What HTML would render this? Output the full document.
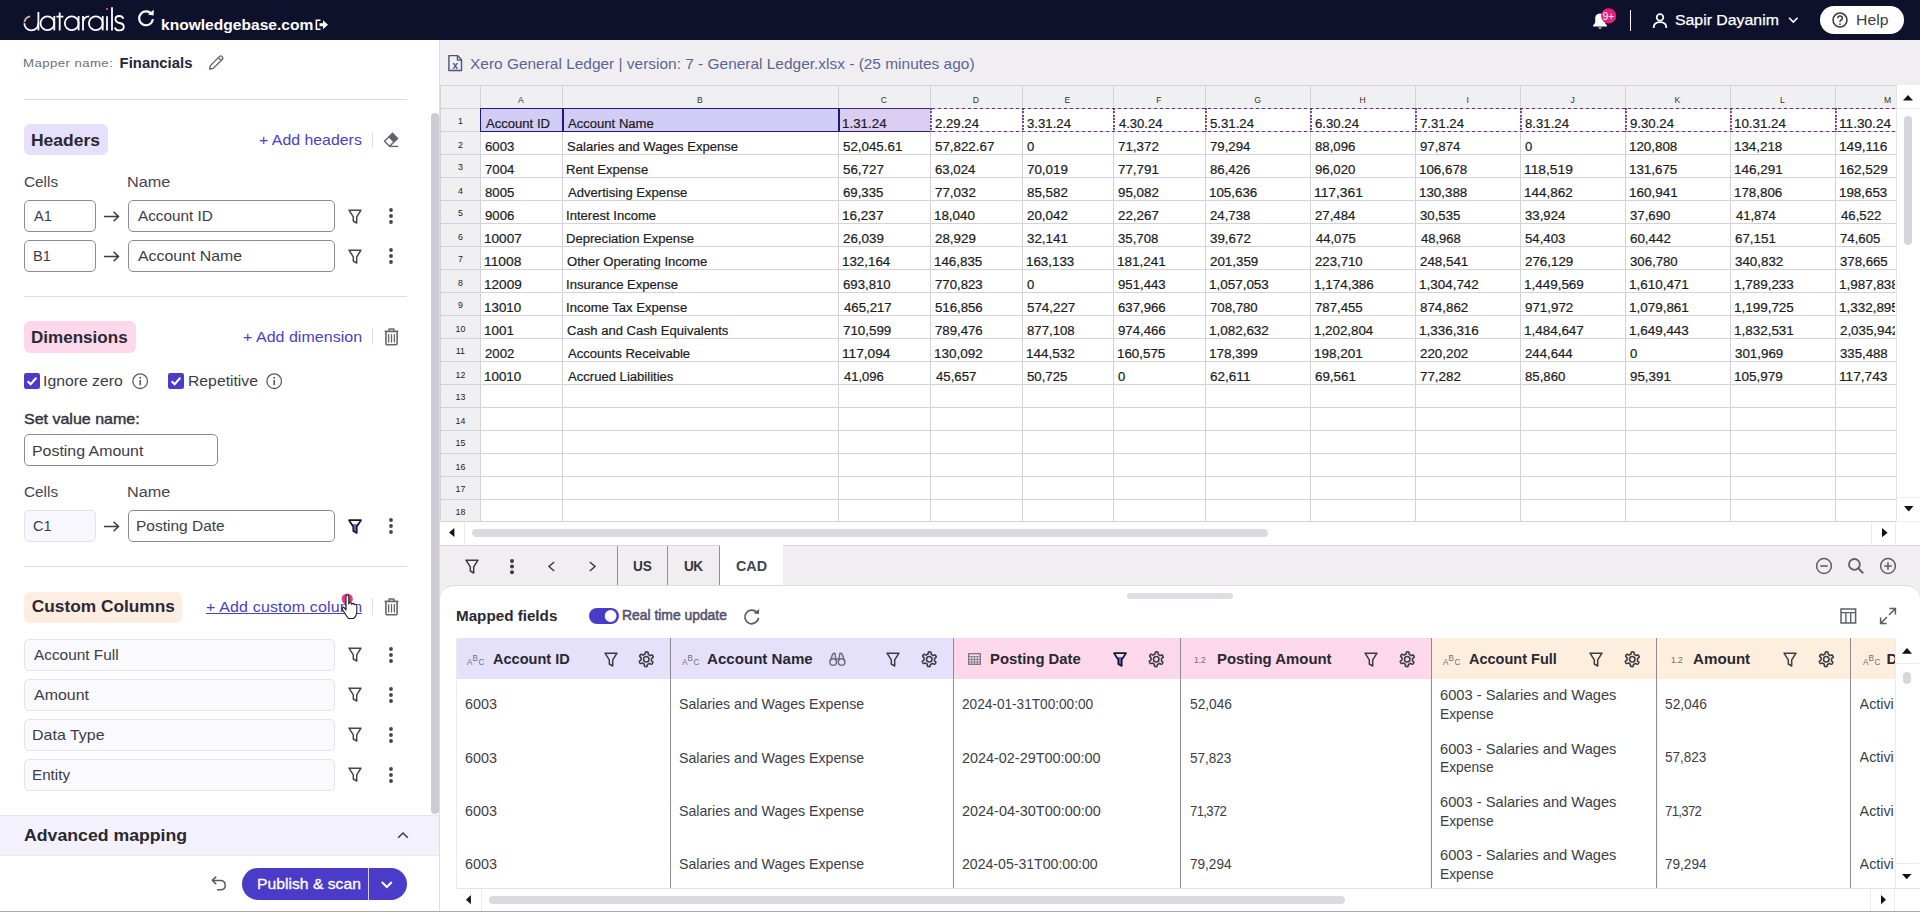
<!DOCTYPE html>
<html><head><meta charset="utf-8"><title>Datarails Mapper</title>
<style>
html,body{margin:0;padding:0;width:1920px;height:912px;overflow:hidden;background:#fff}
body{position:relative;font-family:"Liberation Sans",sans-serif}
svg text{font-family:"Liberation Sans",sans-serif}
</style></head><body>
<div style="position:absolute;left:0px;top:0px;width:1920px;height:912px;background:#ffffff"></div>
<div style="position:absolute;left:440px;top:40px;width:1480px;height:872px;background:#f0eef1"></div>
<div style="position:absolute;left:439px;top:40px;width:1px;height:872px;background:#dddbe3"></div>
<div style="position:absolute;left:0px;top:0px;width:1920px;height:40px;background:#0e112c"></div>
<svg style="position:absolute;left:0px;top:0px;overflow:visible;" width="130" height="39" viewBox="0 0 130 39"><path d="M24.3 23.3 A7.05 7.05 0 0 0 38.4 23.3" fill="none" stroke="#ffffff" stroke-width="1.8"/><path d="M24.4 22.0 A7.05 7.05 0 0 1 30.2 16.3" fill="none" stroke="#e2b49e" stroke-width="1.8"/><path d="M38.4 12 V30.4" stroke="#ffffff" stroke-width="1.8"/><circle cx="47.4" cy="23.3" r="6.9" fill="none" stroke="#ffffff" stroke-width="1.8"/><path d="M54.3 16 V30.4" stroke="#ffffff" stroke-width="1.8"/><path d="M59.7 12.4 V30.4 M56.4 16.6 H63.4" fill="none" stroke="#ffffff" stroke-width="1.8"/><circle cx="71.7" cy="23.3" r="6.9" fill="none" stroke="#ffffff" stroke-width="1.8"/><path d="M78.6 16 V30.4" stroke="#ffffff" stroke-width="1.8"/><path d="M83 30.4 V16 M83 22.5 Q83.4 16.3 89.2 16.3" fill="none" stroke="#ffffff" stroke-width="1.8"/><circle cx="95.8" cy="23.3" r="6.9" fill="none" stroke="#ffffff" stroke-width="1.8"/><path d="M102.7 16 V30.4" stroke="#ffffff" stroke-width="1.8"/><path d="M107 16.2 V30.4" stroke="#ffffff" stroke-width="1.8"/><rect x="106" y="8" width="2" height="2" fill="#ff2d8a"/><path d="M112 7.2 V30.4" stroke="#ffffff" stroke-width="1.8"/><path d="M123.4 18.8 Q122.4 16 119.2 16 Q115.5 16 115.5 19.3 Q115.5 22.3 119.5 23 Q123.8 23.7 123.8 26.8 Q123.8 30.4 119.3 30.4 Q115.6 30.4 114.8 27.4" fill="none" stroke="#ffffff" stroke-width="1.8"/></svg>
<svg style="position:absolute;left:137px;top:9px;overflow:visible;" width="18" height="18" viewBox="0 0 18 18"><path d="M14.6 5.2 A6.9 6.9 0 1 0 15.9 10.2" fill="none" stroke="#fff" stroke-width="2.1"/><path d="M10.8 5.6 L16.6 6.4 L16.8 0.8 Z" fill="#fff"/></svg>
<div style="position:absolute;left:160.61px;top:18px;font-size:14.3px;line-height:1;font-weight:bold;color:#ffffff;white-space:nowrap;letter-spacing:0.000px;transform:scaleX(1.0891);transform-origin:0 0;">knowledgebase.com</div>
<svg style="position:absolute;left:315px;top:19px;overflow:visible;" width="14" height="12" viewBox="0 0 14 12"><path d="M5.5 1.2 H1.4 V10.2 H5.5" fill="none" stroke="#fff" stroke-width="1.6"/><path d="M4.5 4.2 H8 V1.2 L13 5.7 L8 10.2 V7.2 H4.5 Z" fill="#fff"/></svg>
<svg style="position:absolute;left:1592px;top:12px;overflow:visible;" width="17" height="18" viewBox="0 0 17 18"><path d="M8 1.5 C4.3 1.5 3.2 4.3 3.2 7.2 V10.8 L1 13.6 V14.6 H15 V13.6 L12.8 10.8 V7.2 C12.8 4.3 11.7 1.5 8 1.5 Z" fill="#fff"/><path d="M6 15.6 Q8 18 10 15.6 Z" fill="#fff"/></svg>
<svg style="position:absolute;left:1600px;top:8px;overflow:visible;" width="17" height="17" viewBox="0 0 17 17"><circle cx="8.7" cy="7.8" r="7.6" fill="#e5207a"/><text x="8.4" y="11.6" text-anchor="middle" font-family="Liberation Sans" font-size="10" fill="#fff">9+</text></svg>
<div style="position:absolute;left:1630px;top:10px;width:1px;height:21px;background:#ffffff"></div>
<svg style="position:absolute;left:1652px;top:12px;overflow:visible;" width="17" height="17" viewBox="0 0 17 17"><circle cx="8" cy="5.4" r="3.3" fill="none" stroke="#fff" stroke-width="1.7"/><path d="M1.6 16 Q1.6 10.2 8 10.2 Q14.4 10.2 14.4 16" fill="none" stroke="#fff" stroke-width="1.8"/></svg>
<div style="position:absolute;left:1675.48px;top:12px;font-size:15.2px;line-height:1;font-weight:normal;color:#ffffff;white-space:nowrap;letter-spacing:0.000px;transform:scaleX(1.0426);transform-origin:0 0;-webkit-text-stroke:0.25px #ffffff;">Sapir Dayanim</div>
<svg style="position:absolute;left:1788px;top:16px;overflow:visible;" width="11" height="8" viewBox="0 0 11 8"><path d="M1 1.7 L5.3 6 L9.6 1.7" fill="none" stroke="#fff" stroke-width="1.6"/></svg>
<div style="position:absolute;left:1820px;top:6px;width:84px;height:28px;background:#ffffff;border-radius:14px"></div>
<svg style="position:absolute;left:1831px;top:12px;overflow:visible;" width="18" height="17" viewBox="0 0 18 17"><circle cx="9" cy="8.1" r="7" fill="none" stroke="#3a3a3a" stroke-width="1.5"/><path d="M6.8 6.3 Q6.8 4.1 9 4.1 Q11.3 4.1 11.3 6.2 Q11.3 7.6 9.6 8.4 Q9 8.8 9 10" fill="none" stroke="#3a3a3a" stroke-width="1.5"/><circle cx="9" cy="12.2" r="0.9" fill="#3a3a3a"/></svg>
<div style="position:absolute;left:1855.56px;top:12px;font-size:15.2px;line-height:1;font-weight:normal;color:#3d3d3d;white-space:nowrap;letter-spacing:0.000px;transform:scaleX(1.0373);transform-origin:0 0;">Help</div>
<div style="position:absolute;left:23.28px;top:58px;font-size:11.8px;line-height:1;font-weight:normal;color:#6e6e78;white-space:nowrap;letter-spacing:0.375px;transform:scaleX(1.1200);transform-origin:0 0;">Mapper name:</div>
<div style="position:absolute;left:119.60px;top:56px;font-size:14.9px;line-height:1;font-weight:bold;color:#25243a;white-space:nowrap;letter-spacing:0.000px;">Financials</div>
<svg style="position:absolute;left:207px;top:54px;overflow:visible;" width="18" height="18" viewBox="0 0 18 18"><path d="M2.6 15.2 L3.4 11.6 L12.6 2.4 Q13.6 1.4 14.6 2.4 L15.4 3.2 Q16.4 4.2 15.4 5.2 L6.2 14.4 Z M11.4 3.6 L14.2 6.4" fill="none" stroke="#5a5a66" stroke-width="1.3" stroke-linejoin="round"/></svg>
<div style="position:absolute;left:24px;top:99px;width:383px;height:1px;background:#dcdbe2"></div>
<div style="position:absolute;left:24px;top:124px;width:84px;height:31px;background:#e5e0fb;border-radius:6px"></div>
<div style="position:absolute;left:31.49px;top:132px;font-size:17.3px;line-height:1;font-weight:bold;color:#2a2832;white-space:nowrap;letter-spacing:0.000px;transform:scaleX(1.0105);transform-origin:0 0;">Headers</div>
<div style="position:absolute;left:259.44px;top:133px;font-size:14.3px;line-height:1;font-weight:normal;color:#4b40c4;white-space:nowrap;letter-spacing:-0.000px;transform:scaleX(1.1104);transform-origin:0 0;">+ Add headers</div>
<div style="position:absolute;left:372px;top:132px;width:1px;height:16px;background:#dedde4"></div>
<svg style="position:absolute;left:0px;top:0px;overflow:visible;" width="1" height="1" viewBox="0 0 1 1"><path d="M392.50 133.30 L397.60 138.40 L389.50 146.30 L384.50 141.30 Z" fill="none" stroke="#62626c" stroke-width="1.4" stroke-linejoin="miter"/><path d="M392.50 133.30 L397.60 138.40 L393.60 142.40 L388.50 137.30 Z" fill="#62626c"/><path d="M389.50 146.40 H398.20" stroke="#62626c" stroke-width="1.4"/></svg>
<div style="position:absolute;left:23.50px;top:174px;font-size:15.2px;line-height:1;font-weight:normal;color:#46464f;white-space:nowrap;letter-spacing:0.000px;transform:scaleX(1.0091);transform-origin:0 0;">Cells</div>
<div style="position:absolute;left:127.23px;top:174px;font-size:15.2px;line-height:1;font-weight:normal;color:#46464f;white-space:nowrap;letter-spacing:0.000px;transform:scaleX(1.0692);transform-origin:0 0;">Name</div>
<div style="position:absolute;left:24px;top:200px;width:70px;height:30px;background:#fff;border:1px solid #8a8a93;border-radius:5px"></div>
<div style="position:absolute;left:34.00px;top:209px;font-size:14.6px;line-height:1;font-weight:normal;color:#3c3c46;white-space:nowrap;letter-spacing:0.000px;">A1</div>
<svg style="position:absolute;left:103px;top:211px;overflow:visible;" width="17" height="11" viewBox="0 0 17 11"><path d="M1 5.5 H15.5 M10.6 0.8 L15.5 5.5 L10.6 10.2" fill="none" stroke="#3a3a44" stroke-width="1.5"/></svg>
<div style="position:absolute;left:128px;top:200px;width:205px;height:30px;background:#fff;border:1px solid #8a8a93;border-radius:5px"></div>
<div style="position:absolute;left:137.60px;top:209px;font-size:14.6px;line-height:1;font-weight:normal;color:#3c3c46;white-space:nowrap;letter-spacing:0.000px;transform:scaleX(1.0493);transform-origin:0 0;">Account ID</div>
<svg style="position:absolute;left:348px;top:208.5px;overflow:visible;" width="14" height="15" viewBox="0 0 14 15"><path d="M1 1.2 H13 L8.7 7.8 V14 L5.3 12.0 V7.8 Z" fill="none" stroke="#44444e" stroke-width="1.5" stroke-linejoin="round"/></svg>
<svg style="position:absolute;left:387.8px;top:207px;overflow:visible;" width="6" height="18" viewBox="0 0 6 18"><circle cx="3" cy="3" r="1.9" fill="#444"/><circle cx="3" cy="9" r="1.9" fill="#444"/><circle cx="3" cy="15" r="1.9" fill="#444"/></svg>
<div style="position:absolute;left:24px;top:240px;width:70px;height:30px;background:#fff;border:1px solid #8a8a93;border-radius:5px"></div>
<div style="position:absolute;left:33.00px;top:249px;font-size:14.6px;line-height:1;font-weight:normal;color:#3c3c46;white-space:nowrap;letter-spacing:0.000px;">B1</div>
<svg style="position:absolute;left:103px;top:251px;overflow:visible;" width="17" height="11" viewBox="0 0 17 11"><path d="M1 5.5 H15.5 M10.6 0.8 L15.5 5.5 L10.6 10.2" fill="none" stroke="#3a3a44" stroke-width="1.5"/></svg>
<div style="position:absolute;left:128px;top:240px;width:205px;height:30px;background:#fff;border:1px solid #8a8a93;border-radius:5px"></div>
<div style="position:absolute;left:137.60px;top:249px;font-size:14.6px;line-height:1;font-weight:normal;color:#3c3c46;white-space:nowrap;letter-spacing:0.000px;transform:scaleX(1.0874);transform-origin:0 0;">Account Name</div>
<svg style="position:absolute;left:348px;top:248.5px;overflow:visible;" width="14" height="15" viewBox="0 0 14 15"><path d="M1 1.2 H13 L8.7 7.8 V14 L5.3 12.0 V7.8 Z" fill="none" stroke="#44444e" stroke-width="1.5" stroke-linejoin="round"/></svg>
<svg style="position:absolute;left:387.8px;top:247px;overflow:visible;" width="6" height="18" viewBox="0 0 6 18"><circle cx="3" cy="3" r="1.9" fill="#444"/><circle cx="3" cy="9" r="1.9" fill="#444"/><circle cx="3" cy="15" r="1.9" fill="#444"/></svg>
<div style="position:absolute;left:24px;top:296px;width:383px;height:1px;background:#dcdbe2"></div>
<div style="position:absolute;left:24px;top:321px;width:112px;height:32px;background:#fcd8ea;border-radius:6px"></div>
<div style="position:absolute;left:31.31px;top:329px;font-size:17.3px;line-height:1;font-weight:bold;color:#2a2832;white-space:nowrap;letter-spacing:0.000px;transform:scaleX(0.9865);transform-origin:0 0;">Dimensions</div>
<div style="position:absolute;left:243.24px;top:330px;font-size:14.3px;line-height:1;font-weight:normal;color:#4b40c4;white-space:nowrap;letter-spacing:0.013px;transform:scaleX(1.1200);transform-origin:0 0;">+ Add dimension</div>
<div style="position:absolute;left:372px;top:328px;width:1px;height:17px;background:#dedde4"></div>
<svg style="position:absolute;left:384px;top:327.5px;overflow:visible;" width="15" height="18" viewBox="0 0 15 18"><path d="M0.6 3.4 H14.4" stroke="#66666e" stroke-width="1.7"/><path d="M5 3.2 V1.5 Q5 1 5.5 1 H9.5 Q10 1 10 1.5 V3.2" fill="none" stroke="#66666e" stroke-width="1.5"/><path d="M1.9 3.6 V15.4 Q1.9 16.8 3.3 16.8 H11.7 Q13.1 16.8 13.1 15.4 V3.6" fill="none" stroke="#66666e" stroke-width="1.6"/><path d="M4.6 6.6 V14 M7.5 6.6 V14 M10.4 6.6 V14" stroke="#66666e" stroke-width="1.3" stroke-linecap="round"/></svg>
<svg style="position:absolute;left:24px;top:373px;overflow:visible;" width="16" height="16" viewBox="0 0 16 16"><rect x="0" y="0" width="16" height="16" rx="2.2" fill="#4b3bcb"/><path d="M3.6 8.2 L6.6 11.2 L12.4 4.8" fill="none" stroke="#fff" stroke-width="2.1"/></svg>
<div style="position:absolute;left:43.24px;top:373px;font-size:15.2px;line-height:1;font-weight:normal;color:#3c3c46;white-space:nowrap;letter-spacing:0.000px;transform:scaleX(1.0373);transform-origin:0 0;">Ignore zero</div>
<svg style="position:absolute;left:131.5px;top:372.8px;overflow:visible;" width="17" height="17" viewBox="0 0 17 17"><circle cx="8.2" cy="8.2" r="7.3" fill="none" stroke="#5a5a64" stroke-width="1.3"/><path d="M8.2 7 V12.3" stroke="#5a5a64" stroke-width="1.6"/><circle cx="8.2" cy="4.8" r="1" fill="#5a5a64"/></svg>
<svg style="position:absolute;left:168px;top:373px;overflow:visible;" width="16" height="16" viewBox="0 0 16 16"><rect x="0" y="0" width="16" height="16" rx="2.2" fill="#4b3bcb"/><path d="M3.6 8.2 L6.6 11.2 L12.4 4.8" fill="none" stroke="#fff" stroke-width="2.1"/></svg>
<div style="position:absolute;left:187.76px;top:373px;font-size:15.2px;line-height:1;font-weight:normal;color:#3c3c46;white-space:nowrap;letter-spacing:0.000px;transform:scaleX(1.0364);transform-origin:0 0;">Repetitive</div>
<svg style="position:absolute;left:266.3px;top:372.8px;overflow:visible;" width="17" height="17" viewBox="0 0 17 17"><circle cx="8.2" cy="8.2" r="7.3" fill="none" stroke="#5a5a64" stroke-width="1.3"/><path d="M8.2 7 V12.3" stroke="#5a5a64" stroke-width="1.6"/><circle cx="8.2" cy="4.8" r="1" fill="#5a5a64"/></svg>
<div style="position:absolute;left:23.65px;top:412px;font-size:14.6px;line-height:1;font-weight:normal;color:#33333c;white-space:nowrap;letter-spacing:0.000px;transform:scaleX(1.0966);transform-origin:0 0;-webkit-text-stroke:0.4px #33333c;">Set value name:</div>
<div style="position:absolute;left:24px;top:434px;width:192px;height:30px;background:#fff;border:1px solid #8a8a93;border-radius:5px"></div>
<div style="position:absolute;left:32.31px;top:444px;font-size:14.6px;line-height:1;font-weight:normal;color:#3c3c46;white-space:nowrap;letter-spacing:-0.000px;transform:scaleX(1.0891);transform-origin:0 0;">Posting Amount</div>
<div style="position:absolute;left:23.50px;top:484px;font-size:15.2px;line-height:1;font-weight:normal;color:#46464f;white-space:nowrap;letter-spacing:0.000px;transform:scaleX(1.0091);transform-origin:0 0;">Cells</div>
<div style="position:absolute;left:127.23px;top:484px;font-size:15.2px;line-height:1;font-weight:normal;color:#46464f;white-space:nowrap;letter-spacing:0.000px;transform:scaleX(1.0692);transform-origin:0 0;">Name</div>
<div style="position:absolute;left:24px;top:510px;width:70px;height:30px;background:#f8f7fd;border:1px solid #e3e1ec;border-radius:5px"></div>
<div style="position:absolute;left:33.00px;top:519px;font-size:14.6px;line-height:1;font-weight:normal;color:#3c3c46;white-space:nowrap;letter-spacing:0.000px;">C1</div>
<svg style="position:absolute;left:103px;top:521px;overflow:visible;" width="17" height="11" viewBox="0 0 17 11"><path d="M1 5.5 H15.5 M10.6 0.8 L15.5 5.5 L10.6 10.2" fill="none" stroke="#3a3a44" stroke-width="1.5"/></svg>
<div style="position:absolute;left:128px;top:510px;width:205px;height:30px;background:#fff;border:1px solid #8a8a93;border-radius:5px"></div>
<div style="position:absolute;left:136.34px;top:519px;font-size:14.6px;line-height:1;font-weight:normal;color:#3c3c46;white-space:nowrap;letter-spacing:0.000px;transform:scaleX(1.0610);transform-origin:0 0;">Posting Date</div>
<svg style="position:absolute;left:348px;top:518.5px;overflow:visible;" width="14" height="15" viewBox="0 0 14 15"><defs><linearGradient id="fg1" x1="0" y1="0" x2="0" y2="1"><stop offset="0.27" stop-color="#ffffff" stop-opacity="0"/><stop offset="0.27" stop-color="#7a70d8"/><stop offset="1" stop-color="#7a70d8"/></linearGradient></defs><path d="M1 1.2 H13 L8.7 7.8 V14 L5.3 12.0 V7.8 Z" fill="url(#fg1)" stroke="#15152a" stroke-width="1.7" stroke-linejoin="round"/></svg>
<svg style="position:absolute;left:387.8px;top:517px;overflow:visible;" width="6" height="18" viewBox="0 0 6 18"><circle cx="3" cy="3" r="1.9" fill="#444"/><circle cx="3" cy="9" r="1.9" fill="#444"/><circle cx="3" cy="15" r="1.9" fill="#444"/></svg>
<div style="position:absolute;left:24px;top:566px;width:383px;height:1px;background:#dcdbe2"></div>
<div style="position:absolute;left:24px;top:592px;width:158px;height:31px;background:#fdeee1;border-radius:6px"></div>
<div style="position:absolute;left:31.80px;top:598px;font-size:17.3px;line-height:1;font-weight:bold;color:#2a2832;white-space:nowrap;letter-spacing:0.000px;">Custom Columns</div>
<div style="position:absolute;left:206.24px;top:600px;font-size:14.3px;line-height:1;font-weight:normal;color:#4b40c4;white-space:nowrap;letter-spacing:0.133px;transform:scaleX(1.1200);transform-origin:0 0;">+ Add custom column</div>
<div style="position:absolute;left:206px;top:613px;width:156px;height:1.2px;background:#4b40c4"></div>
<div style="position:absolute;left:372px;top:598px;width:1px;height:17px;background:#dedde4"></div>
<svg style="position:absolute;left:384px;top:597.5px;overflow:visible;" width="15" height="18" viewBox="0 0 15 18"><path d="M0.6 3.4 H14.4" stroke="#66666e" stroke-width="1.7"/><path d="M5 3.2 V1.5 Q5 1 5.5 1 H9.5 Q10 1 10 1.5 V3.2" fill="none" stroke="#66666e" stroke-width="1.5"/><path d="M1.9 3.6 V15.4 Q1.9 16.8 3.3 16.8 H11.7 Q13.1 16.8 13.1 15.4 V3.6" fill="none" stroke="#66666e" stroke-width="1.6"/><path d="M4.6 6.6 V14 M7.5 6.6 V14 M10.4 6.6 V14" stroke="#66666e" stroke-width="1.3" stroke-linecap="round"/></svg>
<div style="position:absolute;left:24px;top:639px;width:309px;height:30px;background:#faf9fe;border:1px solid #e4e2ee;border-radius:5px"></div>
<div style="position:absolute;left:33.50px;top:648px;font-size:14.6px;line-height:1;font-weight:normal;color:#3c3c46;white-space:nowrap;letter-spacing:0.000px;transform:scaleX(1.0528);transform-origin:0 0;">Account Full</div>
<svg style="position:absolute;left:347.5px;top:647px;overflow:visible;" width="14" height="15" viewBox="0 0 14 15"><path d="M1 1.2 H13 L8.7 7.8 V14 L5.3 12.0 V7.8 Z" fill="none" stroke="#44444e" stroke-width="1.5" stroke-linejoin="round"/></svg>
<svg style="position:absolute;left:387.8px;top:645.5px;overflow:visible;" width="6" height="18" viewBox="0 0 6 18"><circle cx="3" cy="3" r="1.9" fill="#444"/><circle cx="3" cy="9" r="1.9" fill="#444"/><circle cx="3" cy="15" r="1.9" fill="#444"/></svg>
<div style="position:absolute;left:24px;top:679px;width:309px;height:30px;background:#faf9fe;border:1px solid #e4e2ee;border-radius:5px"></div>
<div style="position:absolute;left:33.50px;top:688px;font-size:14.6px;line-height:1;font-weight:normal;color:#3c3c46;white-space:nowrap;letter-spacing:0.000px;transform:scaleX(1.0931);transform-origin:0 0;">Amount</div>
<svg style="position:absolute;left:347.5px;top:687px;overflow:visible;" width="14" height="15" viewBox="0 0 14 15"><path d="M1 1.2 H13 L8.7 7.8 V14 L5.3 12.0 V7.8 Z" fill="none" stroke="#44444e" stroke-width="1.5" stroke-linejoin="round"/></svg>
<svg style="position:absolute;left:387.8px;top:685.5px;overflow:visible;" width="6" height="18" viewBox="0 0 6 18"><circle cx="3" cy="3" r="1.9" fill="#444"/><circle cx="3" cy="9" r="1.9" fill="#444"/><circle cx="3" cy="15" r="1.9" fill="#444"/></svg>
<div style="position:absolute;left:24px;top:719px;width:309px;height:30px;background:#faf9fe;border:1px solid #e4e2ee;border-radius:5px"></div>
<div style="position:absolute;left:32.40px;top:728px;font-size:14.6px;line-height:1;font-weight:normal;color:#3c3c46;white-space:nowrap;letter-spacing:0.000px;transform:scaleX(1.0961);transform-origin:0 0;">Data Type</div>
<svg style="position:absolute;left:347.5px;top:727px;overflow:visible;" width="14" height="15" viewBox="0 0 14 15"><path d="M1 1.2 H13 L8.7 7.8 V14 L5.3 12.0 V7.8 Z" fill="none" stroke="#44444e" stroke-width="1.5" stroke-linejoin="round"/></svg>
<svg style="position:absolute;left:387.8px;top:725.5px;overflow:visible;" width="6" height="18" viewBox="0 0 6 18"><circle cx="3" cy="3" r="1.9" fill="#444"/><circle cx="3" cy="9" r="1.9" fill="#444"/><circle cx="3" cy="15" r="1.9" fill="#444"/></svg>
<div style="position:absolute;left:24px;top:759px;width:309px;height:30px;background:#faf9fe;border:1px solid #e4e2ee;border-radius:5px"></div>
<div style="position:absolute;left:32.46px;top:768px;font-size:14.6px;line-height:1;font-weight:normal;color:#3c3c46;white-space:nowrap;letter-spacing:0.000px;transform:scaleX(1.0423);transform-origin:0 0;">Entity</div>
<svg style="position:absolute;left:347.5px;top:767px;overflow:visible;" width="14" height="15" viewBox="0 0 14 15"><path d="M1 1.2 H13 L8.7 7.8 V14 L5.3 12.0 V7.8 Z" fill="none" stroke="#44444e" stroke-width="1.5" stroke-linejoin="round"/></svg>
<svg style="position:absolute;left:387.8px;top:765.5px;overflow:visible;" width="6" height="18" viewBox="0 0 6 18"><circle cx="3" cy="3" r="1.9" fill="#444"/><circle cx="3" cy="9" r="1.9" fill="#444"/><circle cx="3" cy="15" r="1.9" fill="#444"/></svg>
<svg style="position:absolute;left:338px;top:591px;overflow:visible;" width="24" height="32" viewBox="0 0 24 32"><circle cx="9.2" cy="8" r="5.6" fill="#e0287d" opacity="0.9"/><path d="M8 5.5 Q8 4 9.4 4 Q10.8 4 10.8 5.5 V13 Q11 11.8 12.3 11.8 Q13.6 11.8 13.6 13.2 Q13.9 12.4 15 12.4 Q16.3 12.4 16.3 13.8 Q16.7 13.2 17.6 13.3 Q18.8 13.5 18.8 15 V20 Q18.8 25 15.5 27.5 H10.5 Q9.2 26 7 22.5 L4.4 18.6 Q3.6 17.4 4.6 16.7 Q5.6 16 6.6 17.2 L8 19 Z" fill="#fff" stroke="#1a1a1a" stroke-width="1.1" stroke-linejoin="round"/></svg>
<div style="position:absolute;left:431px;top:113px;width:7.5px;height:701px;background:#cdcbd4;border-radius:4px"></div>
<div style="position:absolute;left:0px;top:815px;width:439px;height:41px;background:#f3f1fb;border-top:1px solid #e6e4ee;border-bottom:1px solid #ebe9f1;box-sizing:border-box"></div>
<div style="position:absolute;left:24.19px;top:827px;font-size:17.3px;line-height:1;font-weight:bold;color:#2a2832;white-space:nowrap;letter-spacing:0.000px;transform:scaleX(1.0234);transform-origin:0 0;">Advanced mapping</div>
<svg style="position:absolute;left:397px;top:830px;overflow:visible;" width="12" height="10" viewBox="0 0 12 10"><path d="M1.2 7.8 L6 3 L10.8 7.8" fill="none" stroke="#3a3a44" stroke-width="1.5"/></svg>
<svg style="position:absolute;left:209.5px;top:874px;overflow:visible;" width="18" height="18" viewBox="0 0 18 18"><path d="M6.2 2.6 L2.4 6.4 L6.2 10.2" fill="none" stroke="#5a5a64" stroke-width="1.5" stroke-linejoin="round"/><path d="M2.8 6.4 H10.4 Q15.2 6.4 15.2 11.2 Q15.2 15.8 10.4 15.8 H7" fill="none" stroke="#5a5a64" stroke-width="1.5"/></svg>
<div style="position:absolute;left:242px;top:868px;width:165px;height:32px;background:#4b3bc9;border-radius:16px"></div>
<div style="position:absolute;left:367.8px;top:868px;width:1.2px;height:32px;background:#d8d3f6"></div>
<div style="position:absolute;left:256.97px;top:876px;font-size:15.2px;line-height:1;font-weight:normal;color:#ffffff;white-space:nowrap;letter-spacing:-0.000px;transform:scaleX(1.0345);transform-origin:0 0;-webkit-text-stroke:0.3px #ffffff;">Publish &amp; scan</div>
<svg style="position:absolute;left:380px;top:880px;overflow:visible;" width="14" height="10" viewBox="0 0 14 10"><path d="M1.8 2 L6.8 7 L11.8 2" fill="none" stroke="#fff" stroke-width="2"/></svg>
<svg style="position:absolute;left:447px;top:54px;overflow:visible;" width="17" height="18" viewBox="0 0 17 18"><path d="M1.9 1.6 H10.4 L14.5 5.7 V16.5 H1.9 Z" fill="none" stroke="#47557f" stroke-width="1.4" stroke-linejoin="round"/><path d="M10.4 1.6 V6.2 H14.5" fill="none" stroke="#47557f" stroke-width="1.2"/><text x="8.2" y="14.9" text-anchor="middle" font-family="Liberation Serif" font-weight="bold" font-size="10" fill="#47557f">x</text></svg>
<div style="position:absolute;left:470.05px;top:57px;font-size:14.1px;line-height:1;font-weight:normal;color:#5b6592;white-space:nowrap;letter-spacing:0.000px;transform:scaleX(1.0959);transform-origin:0 0;">Xero General Ledger | version: 7 - General Ledger.xlsx - (25 minutes ago)</div>
<div style="position:absolute;left:441px;top:85px;width:1455px;height:436px;background:#ffffff"></div>
<div style="position:absolute;left:441px;top:85px;width:1455px;height:23px;background:#f0eff2"></div>
<div style="position:absolute;left:441px;top:85px;width:39px;height:436px;background:#f0eff2"></div>
<div style="position:absolute;left:441px;top:85px;width:1455px;height:436px;overflow:hidden">
<div style="position:absolute;left:39px;top:23px;width:358px;height:23px;background:#d2cdf6"></div>
<div style="position:absolute;left:397px;top:23px;width:92px;height:23px;background:#dacdf2"></div>
</div>
<div style="position:absolute;left:480px;top:85px;width:1px;height:436px;background:#d3d2d8"></div>
<div style="position:absolute;left:562px;top:85px;width:1px;height:436px;background:#d3d2d8"></div>
<div style="position:absolute;left:838px;top:85px;width:1px;height:436px;background:#d3d2d8"></div>
<div style="position:absolute;left:930px;top:85px;width:1px;height:436px;background:#d3d2d8"></div>
<div style="position:absolute;left:1022px;top:85px;width:1px;height:436px;background:#d3d2d8"></div>
<div style="position:absolute;left:1113px;top:85px;width:1px;height:436px;background:#d3d2d8"></div>
<div style="position:absolute;left:1205px;top:85px;width:1px;height:436px;background:#d3d2d8"></div>
<div style="position:absolute;left:1310px;top:85px;width:1px;height:436px;background:#d3d2d8"></div>
<div style="position:absolute;left:1415px;top:85px;width:1px;height:436px;background:#d3d2d8"></div>
<div style="position:absolute;left:1520px;top:85px;width:1px;height:436px;background:#d3d2d8"></div>
<div style="position:absolute;left:1625px;top:85px;width:1px;height:436px;background:#d3d2d8"></div>
<div style="position:absolute;left:1730px;top:85px;width:1px;height:436px;background:#d3d2d8"></div>
<div style="position:absolute;left:1835px;top:85px;width:1px;height:436px;background:#d3d2d8"></div>
<div style="position:absolute;left:441px;top:108px;width:1455px;height:1px;background:#d3d2d8"></div>
<div style="position:absolute;left:441px;top:131px;width:1455px;height:1px;background:#d3d2d8"></div>
<div style="position:absolute;left:441px;top:154px;width:1455px;height:1px;background:#d3d2d8"></div>
<div style="position:absolute;left:441px;top:177px;width:1455px;height:1px;background:#d3d2d8"></div>
<div style="position:absolute;left:441px;top:200px;width:1455px;height:1px;background:#d3d2d8"></div>
<div style="position:absolute;left:441px;top:223px;width:1455px;height:1px;background:#d3d2d8"></div>
<div style="position:absolute;left:441px;top:246px;width:1455px;height:1px;background:#d3d2d8"></div>
<div style="position:absolute;left:441px;top:269px;width:1455px;height:1px;background:#d3d2d8"></div>
<div style="position:absolute;left:441px;top:292px;width:1455px;height:1px;background:#d3d2d8"></div>
<div style="position:absolute;left:441px;top:315px;width:1455px;height:1px;background:#d3d2d8"></div>
<div style="position:absolute;left:441px;top:338px;width:1455px;height:1px;background:#d3d2d8"></div>
<div style="position:absolute;left:441px;top:361px;width:1455px;height:1px;background:#d3d2d8"></div>
<div style="position:absolute;left:441px;top:384px;width:1455px;height:1px;background:#d3d2d8"></div>
<div style="position:absolute;left:441px;top:407px;width:1455px;height:1px;background:#d3d2d8"></div>
<div style="position:absolute;left:441px;top:430px;width:1455px;height:1px;background:#d3d2d8"></div>
<div style="position:absolute;left:441px;top:453px;width:1455px;height:1px;background:#d3d2d8"></div>
<div style="position:absolute;left:441px;top:476px;width:1455px;height:1px;background:#d3d2d8"></div>
<div style="position:absolute;left:441px;top:499px;width:1455px;height:1px;background:#d3d2d8"></div>
<div style="position:absolute;left:441px;top:521px;width:1455px;height:1px;background:#d3d2d8"></div>
<div style="position:absolute;left:441px;top:85px;width:1455px;height:1px;background:#d3d2d8"></div>
<div style="position:absolute;left:440px;top:85px;width:1px;height:436px;background:#d3d2d8"></div>
<div style="position:absolute;left:480px;top:108px;width:450px;height:1px;background:#1d1a80"></div>
<div style="position:absolute;left:480px;top:131px;width:358px;height:1px;background:#1d1a80"></div>
<div style="position:absolute;left:838px;top:131px;width:92px;height:1px;background:#2c1f52"></div>
<div style="position:absolute;left:838px;top:108px;width:92px;height:1px;background:#4f2575"></div>
<div style="position:absolute;left:480px;top:108px;width:1px;height:24px;background:#1d1a80"></div>
<div style="position:absolute;left:562px;top:108px;width:2px;height:24px;background:#1d1a80"></div>
<div style="position:absolute;left:838px;top:108px;width:2px;height:24px;background:#1d1a80"></div>
<div style="position:absolute;left:932px;top:108px;width:964px;height:1px;background:repeating-linear-gradient(90deg,#632a80 0 3px,transparent 3px 6px)"></div>
<div style="position:absolute;left:932px;top:131px;width:964px;height:1px;background:repeating-linear-gradient(90deg,#632a80 0 3px,transparent 3px 6px)"></div>
<div style="position:absolute;left:930px;top:108px;width:2px;height:24px;background:repeating-linear-gradient(180deg,#632a80 0 2px,transparent 2px 3.3px);opacity:0.85"></div>
<div style="position:absolute;left:1022px;top:108px;width:2px;height:24px;background:repeating-linear-gradient(180deg,#632a80 0 2px,transparent 2px 3.3px);opacity:0.85"></div>
<div style="position:absolute;left:1113px;top:108px;width:2px;height:24px;background:repeating-linear-gradient(180deg,#632a80 0 2px,transparent 2px 3.3px);opacity:0.85"></div>
<div style="position:absolute;left:1205px;top:108px;width:2px;height:24px;background:repeating-linear-gradient(180deg,#632a80 0 2px,transparent 2px 3.3px);opacity:0.85"></div>
<div style="position:absolute;left:1310px;top:108px;width:2px;height:24px;background:repeating-linear-gradient(180deg,#632a80 0 2px,transparent 2px 3.3px);opacity:0.85"></div>
<div style="position:absolute;left:1415px;top:108px;width:2px;height:24px;background:repeating-linear-gradient(180deg,#632a80 0 2px,transparent 2px 3.3px);opacity:0.85"></div>
<div style="position:absolute;left:1520px;top:108px;width:2px;height:24px;background:repeating-linear-gradient(180deg,#632a80 0 2px,transparent 2px 3.3px);opacity:0.85"></div>
<div style="position:absolute;left:1625px;top:108px;width:2px;height:24px;background:repeating-linear-gradient(180deg,#632a80 0 2px,transparent 2px 3.3px);opacity:0.85"></div>
<div style="position:absolute;left:1730px;top:108px;width:2px;height:24px;background:repeating-linear-gradient(180deg,#632a80 0 2px,transparent 2px 3.3px);opacity:0.85"></div>
<div style="position:absolute;left:1835px;top:108px;width:2px;height:24px;background:repeating-linear-gradient(180deg,#632a80 0 2px,transparent 2px 3.3px);opacity:0.85"></div>
<div style="position:absolute;left:518.00px;top:96px;font-size:8.6px;line-height:1;font-weight:normal;color:#333;white-space:nowrap;letter-spacing:0.000px;">A</div>
<div style="position:absolute;left:697.00px;top:96px;font-size:8.6px;line-height:1;font-weight:normal;color:#333;white-space:nowrap;letter-spacing:0.000px;">B</div>
<div style="position:absolute;left:880.75px;top:96px;font-size:8.6px;line-height:1;font-weight:normal;color:#333;white-space:nowrap;letter-spacing:0.000px;">C</div>
<div style="position:absolute;left:972.75px;top:96px;font-size:8.6px;line-height:1;font-weight:normal;color:#333;white-space:nowrap;letter-spacing:0.000px;">D</div>
<div style="position:absolute;left:1064.50px;top:96px;font-size:8.6px;line-height:1;font-weight:normal;color:#333;white-space:nowrap;letter-spacing:0.000px;">E</div>
<div style="position:absolute;left:1156.25px;top:96px;font-size:8.6px;line-height:1;font-weight:normal;color:#333;white-space:nowrap;letter-spacing:0.000px;">F</div>
<div style="position:absolute;left:1254.25px;top:96px;font-size:8.6px;line-height:1;font-weight:normal;color:#333;white-space:nowrap;letter-spacing:0.000px;">G</div>
<div style="position:absolute;left:1359.50px;top:96px;font-size:8.6px;line-height:1;font-weight:normal;color:#333;white-space:nowrap;letter-spacing:0.000px;">H</div>
<div style="position:absolute;left:1466.50px;top:96px;font-size:8.6px;line-height:1;font-weight:normal;color:#333;white-space:nowrap;letter-spacing:0.000px;">I</div>
<div style="position:absolute;left:1570.50px;top:96px;font-size:8.6px;line-height:1;font-weight:normal;color:#333;white-space:nowrap;letter-spacing:0.000px;">J</div>
<div style="position:absolute;left:1674.50px;top:96px;font-size:8.6px;line-height:1;font-weight:normal;color:#333;white-space:nowrap;letter-spacing:0.000px;">K</div>
<div style="position:absolute;left:1780.00px;top:96px;font-size:8.6px;line-height:1;font-weight:normal;color:#333;white-space:nowrap;letter-spacing:0.000px;">L</div>
<div style="position:absolute;left:1884.00px;top:96px;font-size:8.6px;line-height:1;font-weight:normal;color:#333;white-space:nowrap;letter-spacing:0.000px;">M</div>
<div style="position:absolute;left:458.00px;top:117px;font-size:8.8px;line-height:1;font-weight:normal;color:#222;white-space:nowrap;letter-spacing:0.000px;">1</div>
<div style="position:absolute;left:458.00px;top:141px;font-size:8.8px;line-height:1;font-weight:normal;color:#222;white-space:nowrap;letter-spacing:0.000px;">2</div>
<div style="position:absolute;left:458.00px;top:163px;font-size:8.8px;line-height:1;font-weight:normal;color:#222;white-space:nowrap;letter-spacing:0.000px;">3</div>
<div style="position:absolute;left:458.00px;top:187px;font-size:8.8px;line-height:1;font-weight:normal;color:#222;white-space:nowrap;letter-spacing:0.000px;">4</div>
<div style="position:absolute;left:458.00px;top:209px;font-size:8.8px;line-height:1;font-weight:normal;color:#222;white-space:nowrap;letter-spacing:0.000px;">5</div>
<div style="position:absolute;left:458.00px;top:233px;font-size:8.8px;line-height:1;font-weight:normal;color:#222;white-space:nowrap;letter-spacing:0.000px;">6</div>
<div style="position:absolute;left:458.00px;top:255px;font-size:8.8px;line-height:1;font-weight:normal;color:#222;white-space:nowrap;letter-spacing:0.000px;">7</div>
<div style="position:absolute;left:458.00px;top:279px;font-size:8.8px;line-height:1;font-weight:normal;color:#222;white-space:nowrap;letter-spacing:0.000px;">8</div>
<div style="position:absolute;left:458.00px;top:301px;font-size:8.8px;line-height:1;font-weight:normal;color:#222;white-space:nowrap;letter-spacing:0.000px;">9</div>
<div style="position:absolute;left:455.50px;top:325px;font-size:8.8px;line-height:1;font-weight:normal;color:#222;white-space:nowrap;letter-spacing:0.000px;">10</div>
<div style="position:absolute;left:455.75px;top:347px;font-size:8.8px;line-height:1;font-weight:normal;color:#222;white-space:nowrap;letter-spacing:0.000px;">11</div>
<div style="position:absolute;left:455.50px;top:371px;font-size:8.8px;line-height:1;font-weight:normal;color:#222;white-space:nowrap;letter-spacing:0.000px;">12</div>
<div style="position:absolute;left:455.50px;top:393px;font-size:8.8px;line-height:1;font-weight:normal;color:#222;white-space:nowrap;letter-spacing:0.000px;">13</div>
<div style="position:absolute;left:455.50px;top:417px;font-size:8.8px;line-height:1;font-weight:normal;color:#222;white-space:nowrap;letter-spacing:0.000px;">14</div>
<div style="position:absolute;left:455.50px;top:439px;font-size:8.8px;line-height:1;font-weight:normal;color:#222;white-space:nowrap;letter-spacing:0.000px;">15</div>
<div style="position:absolute;left:455.50px;top:463px;font-size:8.8px;line-height:1;font-weight:normal;color:#222;white-space:nowrap;letter-spacing:0.000px;">16</div>
<div style="position:absolute;left:455.50px;top:485px;font-size:8.8px;line-height:1;font-weight:normal;color:#222;white-space:nowrap;letter-spacing:0.000px;">17</div>
<div style="position:absolute;left:455.50px;top:508px;font-size:8.8px;line-height:1;font-weight:normal;color:#222;white-space:nowrap;letter-spacing:0.000px;">18</div>
<div style="position:absolute;left:485.50px;top:118px;font-size:12.5px;line-height:1;font-weight:normal;color:#1c1c1c;white-space:nowrap;letter-spacing:0.000px;transform:scaleX(1.0462);transform-origin:0 0;-webkit-text-stroke:0.2px #1c1c1c;">Account ID</div>
<div style="position:absolute;left:567.50px;top:118px;font-size:12.5px;line-height:1;font-weight:normal;color:#1c1c1c;white-space:nowrap;letter-spacing:0.000px;transform:scaleX(1.0462);transform-origin:0 0;-webkit-text-stroke:0.2px #1c1c1c;">Account Name</div>
<div style="position:absolute;left:842.43px;top:118px;font-size:12.5px;line-height:1;font-weight:normal;color:#1c1c1c;white-space:nowrap;letter-spacing:0.000px;transform:scaleX(1.0687);transform-origin:0 0;-webkit-text-stroke:0.2px #1c1c1c;">1.31.24</div>
<div style="position:absolute;left:934.97px;top:118px;font-size:12.5px;line-height:1;font-weight:normal;color:#1c1c1c;white-space:nowrap;letter-spacing:-0.000px;transform:scaleX(1.0557);transform-origin:0 0;-webkit-text-stroke:0.2px #1c1c1c;">2.29.24</div>
<div style="position:absolute;left:1026.97px;top:118px;font-size:12.5px;line-height:1;font-weight:normal;color:#1c1c1c;white-space:nowrap;letter-spacing:-0.000px;transform:scaleX(1.0557);transform-origin:0 0;-webkit-text-stroke:0.2px #1c1c1c;">3.31.24</div>
<div style="position:absolute;left:1118.50px;top:118px;font-size:12.5px;line-height:1;font-weight:normal;color:#1c1c1c;white-space:nowrap;letter-spacing:0.000px;transform:scaleX(1.0429);transform-origin:0 0;-webkit-text-stroke:0.2px #1c1c1c;">4.30.24</div>
<div style="position:absolute;left:1209.97px;top:118px;font-size:12.5px;line-height:1;font-weight:normal;color:#1c1c1c;white-space:nowrap;letter-spacing:-0.000px;transform:scaleX(1.0557);transform-origin:0 0;-webkit-text-stroke:0.2px #1c1c1c;">5.31.24</div>
<div style="position:absolute;left:1314.97px;top:118px;font-size:12.5px;line-height:1;font-weight:normal;color:#1c1c1c;white-space:nowrap;letter-spacing:-0.000px;transform:scaleX(1.0557);transform-origin:0 0;-webkit-text-stroke:0.2px #1c1c1c;">6.30.24</div>
<div style="position:absolute;left:1419.97px;top:118px;font-size:12.5px;line-height:1;font-weight:normal;color:#1c1c1c;white-space:nowrap;letter-spacing:-0.000px;transform:scaleX(1.0557);transform-origin:0 0;-webkit-text-stroke:0.2px #1c1c1c;">7.31.24</div>
<div style="position:absolute;left:1524.97px;top:118px;font-size:12.5px;line-height:1;font-weight:normal;color:#1c1c1c;white-space:nowrap;letter-spacing:-0.000px;transform:scaleX(1.0557);transform-origin:0 0;-webkit-text-stroke:0.2px #1c1c1c;">8.31.24</div>
<div style="position:absolute;left:1629.97px;top:118px;font-size:12.5px;line-height:1;font-weight:normal;color:#1c1c1c;white-space:nowrap;letter-spacing:-0.000px;transform:scaleX(1.0557);transform-origin:0 0;-webkit-text-stroke:0.2px #1c1c1c;">9.30.24</div>
<div style="position:absolute;left:1734.43px;top:118px;font-size:12.5px;line-height:1;font-weight:normal;color:#1c1c1c;white-space:nowrap;letter-spacing:0.000px;transform:scaleX(1.0678);transform-origin:0 0;-webkit-text-stroke:0.2px #1c1c1c;">10.31.24</div>
<div style="position:absolute;left:1839.41px;top:114px;width:55.59px;height:22.5px;overflow:hidden"><div style="position:absolute;left:0;top:4px;font-size:12.5px;line-height:1;font-weight:normal;color:#1c1c1c;white-space:nowrap;letter-spacing:0.000px;transform:scaleX(1.0907);transform-origin:0 0;-webkit-text-stroke:0.2px #1c1c1c;">11.30.24</div></div>
<div style="position:absolute;left:484.97px;top:141px;font-size:12.5px;line-height:1;font-weight:normal;color:#1c1c1c;white-space:nowrap;letter-spacing:-0.000px;transform:scaleX(1.0537);transform-origin:0 0;-webkit-text-stroke:0.2px #1c1c1c;">6003</div>
<div style="position:absolute;left:566.98px;top:141px;font-size:12.5px;line-height:1;font-weight:normal;color:#1c1c1c;white-space:nowrap;letter-spacing:0.000px;transform:scaleX(1.0462);transform-origin:0 0;-webkit-text-stroke:0.2px #1c1c1c;">Salaries and Wages Expense</div>
<div style="position:absolute;left:842.97px;top:141px;font-size:12.5px;line-height:1;font-weight:normal;color:#1c1c1c;white-space:nowrap;letter-spacing:0.000px;transform:scaleX(1.0666);transform-origin:0 0;-webkit-text-stroke:0.2px #1c1c1c;">52,045.61</div>
<div style="position:absolute;left:934.97px;top:141px;font-size:12.5px;line-height:1;font-weight:normal;color:#1c1c1c;white-space:nowrap;letter-spacing:0.000px;transform:scaleX(1.0666);transform-origin:0 0;-webkit-text-stroke:0.2px #1c1c1c;">57,822.67</div>
<div style="position:absolute;left:1026.98px;top:141px;font-size:12.5px;line-height:1;font-weight:normal;color:#1c1c1c;white-space:nowrap;letter-spacing:0.000px;transform:scaleX(1.0462);transform-origin:0 0;-webkit-text-stroke:0.2px #1c1c1c;">0</div>
<div style="position:absolute;left:1117.97px;top:141px;font-size:12.5px;line-height:1;font-weight:normal;color:#1c1c1c;white-space:nowrap;letter-spacing:0.000px;transform:scaleX(1.0691);transform-origin:0 0;-webkit-text-stroke:0.2px #1c1c1c;">71,372</div>
<div style="position:absolute;left:1209.97px;top:141px;font-size:12.5px;line-height:1;font-weight:normal;color:#1c1c1c;white-space:nowrap;letter-spacing:0.000px;transform:scaleX(1.0548);transform-origin:0 0;-webkit-text-stroke:0.2px #1c1c1c;">79,294</div>
<div style="position:absolute;left:1314.97px;top:141px;font-size:12.5px;line-height:1;font-weight:normal;color:#1c1c1c;white-space:nowrap;letter-spacing:0.000px;transform:scaleX(1.0548);transform-origin:0 0;-webkit-text-stroke:0.2px #1c1c1c;">88,096</div>
<div style="position:absolute;left:1419.97px;top:141px;font-size:12.5px;line-height:1;font-weight:normal;color:#1c1c1c;white-space:nowrap;letter-spacing:0.000px;transform:scaleX(1.0548);transform-origin:0 0;-webkit-text-stroke:0.2px #1c1c1c;">97,874</div>
<div style="position:absolute;left:1524.98px;top:141px;font-size:12.5px;line-height:1;font-weight:normal;color:#1c1c1c;white-space:nowrap;letter-spacing:0.000px;transform:scaleX(1.0462);transform-origin:0 0;-webkit-text-stroke:0.2px #1c1c1c;">0</div>
<div style="position:absolute;left:1629.43px;top:141px;font-size:12.5px;line-height:1;font-weight:normal;color:#1c1c1c;white-space:nowrap;letter-spacing:0.000px;transform:scaleX(1.0680);transform-origin:0 0;-webkit-text-stroke:0.2px #1c1c1c;">120,808</div>
<div style="position:absolute;left:1734.43px;top:141px;font-size:12.5px;line-height:1;font-weight:normal;color:#1c1c1c;white-space:nowrap;letter-spacing:0.000px;transform:scaleX(1.0680);transform-origin:0 0;-webkit-text-stroke:0.2px #1c1c1c;">134,218</div>
<div style="position:absolute;left:1839.41px;top:137px;width:55.59px;height:22.5px;overflow:hidden"><div style="position:absolute;left:0;top:4px;font-size:12.5px;line-height:1;font-weight:normal;color:#1c1c1c;white-space:nowrap;letter-spacing:-0.000px;transform:scaleX(1.0929);transform-origin:0 0;-webkit-text-stroke:0.2px #1c1c1c;">149,116</div></div>
<div style="position:absolute;left:484.97px;top:164px;font-size:12.5px;line-height:1;font-weight:normal;color:#1c1c1c;white-space:nowrap;letter-spacing:-0.000px;transform:scaleX(1.0537);transform-origin:0 0;-webkit-text-stroke:0.2px #1c1c1c;">7004</div>
<div style="position:absolute;left:566.45px;top:164px;font-size:12.5px;line-height:1;font-weight:normal;color:#1c1c1c;white-space:nowrap;letter-spacing:0.000px;transform:scaleX(1.0462);transform-origin:0 0;-webkit-text-stroke:0.2px #1c1c1c;">Rent Expense</div>
<div style="position:absolute;left:842.97px;top:164px;font-size:12.5px;line-height:1;font-weight:normal;color:#1c1c1c;white-space:nowrap;letter-spacing:0.000px;transform:scaleX(1.0691);transform-origin:0 0;-webkit-text-stroke:0.2px #1c1c1c;">56,727</div>
<div style="position:absolute;left:934.97px;top:164px;font-size:12.5px;line-height:1;font-weight:normal;color:#1c1c1c;white-space:nowrap;letter-spacing:0.000px;transform:scaleX(1.0548);transform-origin:0 0;-webkit-text-stroke:0.2px #1c1c1c;">63,024</div>
<div style="position:absolute;left:1026.97px;top:164px;font-size:12.5px;line-height:1;font-weight:normal;color:#1c1c1c;white-space:nowrap;letter-spacing:0.000px;transform:scaleX(1.0691);transform-origin:0 0;-webkit-text-stroke:0.2px #1c1c1c;">70,019</div>
<div style="position:absolute;left:1117.97px;top:164px;font-size:12.5px;line-height:1;font-weight:normal;color:#1c1c1c;white-space:nowrap;letter-spacing:0.000px;transform:scaleX(1.0691);transform-origin:0 0;-webkit-text-stroke:0.2px #1c1c1c;">77,791</div>
<div style="position:absolute;left:1209.97px;top:164px;font-size:12.5px;line-height:1;font-weight:normal;color:#1c1c1c;white-space:nowrap;letter-spacing:0.000px;transform:scaleX(1.0548);transform-origin:0 0;-webkit-text-stroke:0.2px #1c1c1c;">86,426</div>
<div style="position:absolute;left:1314.97px;top:164px;font-size:12.5px;line-height:1;font-weight:normal;color:#1c1c1c;white-space:nowrap;letter-spacing:0.000px;transform:scaleX(1.0548);transform-origin:0 0;-webkit-text-stroke:0.2px #1c1c1c;">96,020</div>
<div style="position:absolute;left:1419.43px;top:164px;font-size:12.5px;line-height:1;font-weight:normal;color:#1c1c1c;white-space:nowrap;letter-spacing:0.000px;transform:scaleX(1.0680);transform-origin:0 0;-webkit-text-stroke:0.2px #1c1c1c;">106,678</div>
<div style="position:absolute;left:1524.39px;top:164px;font-size:12.5px;line-height:1;font-weight:normal;color:#1c1c1c;white-space:nowrap;letter-spacing:0.000px;transform:scaleX(1.1057);transform-origin:0 0;-webkit-text-stroke:0.2px #1c1c1c;">118,519</div>
<div style="position:absolute;left:1629.43px;top:164px;font-size:12.5px;line-height:1;font-weight:normal;color:#1c1c1c;white-space:nowrap;letter-spacing:0.000px;transform:scaleX(1.0680);transform-origin:0 0;-webkit-text-stroke:0.2px #1c1c1c;">131,675</div>
<div style="position:absolute;left:1734.42px;top:164px;font-size:12.5px;line-height:1;font-weight:normal;color:#1c1c1c;white-space:nowrap;letter-spacing:-0.000px;transform:scaleX(1.0803);transform-origin:0 0;-webkit-text-stroke:0.2px #1c1c1c;">146,291</div>
<div style="position:absolute;left:1839.42px;top:160px;width:55.58px;height:22.5px;overflow:hidden"><div style="position:absolute;left:0;top:4px;font-size:12.5px;line-height:1;font-weight:normal;color:#1c1c1c;white-space:nowrap;letter-spacing:-0.000px;transform:scaleX(1.0803);transform-origin:0 0;-webkit-text-stroke:0.2px #1c1c1c;">162,529</div></div>
<div style="position:absolute;left:484.97px;top:187px;font-size:12.5px;line-height:1;font-weight:normal;color:#1c1c1c;white-space:nowrap;letter-spacing:-0.000px;transform:scaleX(1.0537);transform-origin:0 0;-webkit-text-stroke:0.2px #1c1c1c;">8005</div>
<div style="position:absolute;left:567.50px;top:187px;font-size:12.5px;line-height:1;font-weight:normal;color:#1c1c1c;white-space:nowrap;letter-spacing:0.000px;transform:scaleX(1.0462);transform-origin:0 0;-webkit-text-stroke:0.2px #1c1c1c;">Advertising Expense</div>
<div style="position:absolute;left:842.97px;top:187px;font-size:12.5px;line-height:1;font-weight:normal;color:#1c1c1c;white-space:nowrap;letter-spacing:0.000px;transform:scaleX(1.0548);transform-origin:0 0;-webkit-text-stroke:0.2px #1c1c1c;">69,335</div>
<div style="position:absolute;left:934.97px;top:187px;font-size:12.5px;line-height:1;font-weight:normal;color:#1c1c1c;white-space:nowrap;letter-spacing:0.000px;transform:scaleX(1.0691);transform-origin:0 0;-webkit-text-stroke:0.2px #1c1c1c;">77,032</div>
<div style="position:absolute;left:1026.97px;top:187px;font-size:12.5px;line-height:1;font-weight:normal;color:#1c1c1c;white-space:nowrap;letter-spacing:0.000px;transform:scaleX(1.0691);transform-origin:0 0;-webkit-text-stroke:0.2px #1c1c1c;">85,582</div>
<div style="position:absolute;left:1117.97px;top:187px;font-size:12.5px;line-height:1;font-weight:normal;color:#1c1c1c;white-space:nowrap;letter-spacing:0.000px;transform:scaleX(1.0691);transform-origin:0 0;-webkit-text-stroke:0.2px #1c1c1c;">95,082</div>
<div style="position:absolute;left:1209.43px;top:187px;font-size:12.5px;line-height:1;font-weight:normal;color:#1c1c1c;white-space:nowrap;letter-spacing:0.000px;transform:scaleX(1.0680);transform-origin:0 0;-webkit-text-stroke:0.2px #1c1c1c;">105,636</div>
<div style="position:absolute;left:1314.39px;top:187px;font-size:12.5px;line-height:1;font-weight:normal;color:#1c1c1c;white-space:nowrap;letter-spacing:0.000px;transform:scaleX(1.1057);transform-origin:0 0;-webkit-text-stroke:0.2px #1c1c1c;">117,361</div>
<div style="position:absolute;left:1419.43px;top:187px;font-size:12.5px;line-height:1;font-weight:normal;color:#1c1c1c;white-space:nowrap;letter-spacing:0.000px;transform:scaleX(1.0680);transform-origin:0 0;-webkit-text-stroke:0.2px #1c1c1c;">130,388</div>
<div style="position:absolute;left:1524.42px;top:187px;font-size:12.5px;line-height:1;font-weight:normal;color:#1c1c1c;white-space:nowrap;letter-spacing:-0.000px;transform:scaleX(1.0803);transform-origin:0 0;-webkit-text-stroke:0.2px #1c1c1c;">144,862</div>
<div style="position:absolute;left:1629.42px;top:187px;font-size:12.5px;line-height:1;font-weight:normal;color:#1c1c1c;white-space:nowrap;letter-spacing:-0.000px;transform:scaleX(1.0803);transform-origin:0 0;-webkit-text-stroke:0.2px #1c1c1c;">160,941</div>
<div style="position:absolute;left:1734.43px;top:187px;font-size:12.5px;line-height:1;font-weight:normal;color:#1c1c1c;white-space:nowrap;letter-spacing:0.000px;transform:scaleX(1.0680);transform-origin:0 0;-webkit-text-stroke:0.2px #1c1c1c;">178,806</div>
<div style="position:absolute;left:1839.43px;top:183px;width:55.57px;height:22.5px;overflow:hidden"><div style="position:absolute;left:0;top:4px;font-size:12.5px;line-height:1;font-weight:normal;color:#1c1c1c;white-space:nowrap;letter-spacing:0.000px;transform:scaleX(1.0680);transform-origin:0 0;-webkit-text-stroke:0.2px #1c1c1c;">198,653</div></div>
<div style="position:absolute;left:484.97px;top:210px;font-size:12.5px;line-height:1;font-weight:normal;color:#1c1c1c;white-space:nowrap;letter-spacing:-0.000px;transform:scaleX(1.0537);transform-origin:0 0;-webkit-text-stroke:0.2px #1c1c1c;">9006</div>
<div style="position:absolute;left:566.45px;top:210px;font-size:12.5px;line-height:1;font-weight:normal;color:#1c1c1c;white-space:nowrap;letter-spacing:0.000px;transform:scaleX(1.0462);transform-origin:0 0;-webkit-text-stroke:0.2px #1c1c1c;">Interest Income</div>
<div style="position:absolute;left:842.42px;top:210px;font-size:12.5px;line-height:1;font-weight:normal;color:#1c1c1c;white-space:nowrap;letter-spacing:0.000px;transform:scaleX(1.0837);transform-origin:0 0;-webkit-text-stroke:0.2px #1c1c1c;">16,237</div>
<div style="position:absolute;left:934.43px;top:210px;font-size:12.5px;line-height:1;font-weight:normal;color:#1c1c1c;white-space:nowrap;letter-spacing:0.000px;transform:scaleX(1.0691);transform-origin:0 0;-webkit-text-stroke:0.2px #1c1c1c;">18,040</div>
<div style="position:absolute;left:1026.97px;top:210px;font-size:12.5px;line-height:1;font-weight:normal;color:#1c1c1c;white-space:nowrap;letter-spacing:0.000px;transform:scaleX(1.0691);transform-origin:0 0;-webkit-text-stroke:0.2px #1c1c1c;">20,042</div>
<div style="position:absolute;left:1117.97px;top:210px;font-size:12.5px;line-height:1;font-weight:normal;color:#1c1c1c;white-space:nowrap;letter-spacing:0.000px;transform:scaleX(1.0691);transform-origin:0 0;-webkit-text-stroke:0.2px #1c1c1c;">22,267</div>
<div style="position:absolute;left:1209.97px;top:210px;font-size:12.5px;line-height:1;font-weight:normal;color:#1c1c1c;white-space:nowrap;letter-spacing:0.000px;transform:scaleX(1.0548);transform-origin:0 0;-webkit-text-stroke:0.2px #1c1c1c;">24,738</div>
<div style="position:absolute;left:1314.97px;top:210px;font-size:12.5px;line-height:1;font-weight:normal;color:#1c1c1c;white-space:nowrap;letter-spacing:0.000px;transform:scaleX(1.0548);transform-origin:0 0;-webkit-text-stroke:0.2px #1c1c1c;">27,484</div>
<div style="position:absolute;left:1419.97px;top:210px;font-size:12.5px;line-height:1;font-weight:normal;color:#1c1c1c;white-space:nowrap;letter-spacing:0.000px;transform:scaleX(1.0548);transform-origin:0 0;-webkit-text-stroke:0.2px #1c1c1c;">30,535</div>
<div style="position:absolute;left:1524.97px;top:210px;font-size:12.5px;line-height:1;font-weight:normal;color:#1c1c1c;white-space:nowrap;letter-spacing:0.000px;transform:scaleX(1.0548);transform-origin:0 0;-webkit-text-stroke:0.2px #1c1c1c;">33,924</div>
<div style="position:absolute;left:1629.97px;top:210px;font-size:12.5px;line-height:1;font-weight:normal;color:#1c1c1c;white-space:nowrap;letter-spacing:0.000px;transform:scaleX(1.0548);transform-origin:0 0;-webkit-text-stroke:0.2px #1c1c1c;">37,690</div>
<div style="position:absolute;left:1735.50px;top:210px;font-size:12.5px;line-height:1;font-weight:normal;color:#1c1c1c;white-space:nowrap;letter-spacing:0.000px;transform:scaleX(1.0409);transform-origin:0 0;-webkit-text-stroke:0.2px #1c1c1c;">41,874</div>
<div style="position:absolute;left:1840.50px;top:206px;width:54.50px;height:22.5px;overflow:hidden"><div style="position:absolute;left:0;top:4px;font-size:12.5px;line-height:1;font-weight:normal;color:#1c1c1c;white-space:nowrap;letter-spacing:0.000px;transform:scaleX(1.0548);transform-origin:0 0;-webkit-text-stroke:0.2px #1c1c1c;">46,522</div></div>
<div style="position:absolute;left:484.41px;top:233px;font-size:12.5px;line-height:1;font-weight:normal;color:#1c1c1c;white-space:nowrap;letter-spacing:0.000px;transform:scaleX(1.0875);transform-origin:0 0;-webkit-text-stroke:0.2px #1c1c1c;">10007</div>
<div style="position:absolute;left:566.45px;top:233px;font-size:12.5px;line-height:1;font-weight:normal;color:#1c1c1c;white-space:nowrap;letter-spacing:0.000px;transform:scaleX(1.0462);transform-origin:0 0;-webkit-text-stroke:0.2px #1c1c1c;">Depreciation Expense</div>
<div style="position:absolute;left:842.97px;top:233px;font-size:12.5px;line-height:1;font-weight:normal;color:#1c1c1c;white-space:nowrap;letter-spacing:0.000px;transform:scaleX(1.0691);transform-origin:0 0;-webkit-text-stroke:0.2px #1c1c1c;">26,039</div>
<div style="position:absolute;left:934.97px;top:233px;font-size:12.5px;line-height:1;font-weight:normal;color:#1c1c1c;white-space:nowrap;letter-spacing:0.000px;transform:scaleX(1.0691);transform-origin:0 0;-webkit-text-stroke:0.2px #1c1c1c;">28,929</div>
<div style="position:absolute;left:1026.97px;top:233px;font-size:12.5px;line-height:1;font-weight:normal;color:#1c1c1c;white-space:nowrap;letter-spacing:0.000px;transform:scaleX(1.0691);transform-origin:0 0;-webkit-text-stroke:0.2px #1c1c1c;">32,141</div>
<div style="position:absolute;left:1117.97px;top:233px;font-size:12.5px;line-height:1;font-weight:normal;color:#1c1c1c;white-space:nowrap;letter-spacing:0.000px;transform:scaleX(1.0548);transform-origin:0 0;-webkit-text-stroke:0.2px #1c1c1c;">35,708</div>
<div style="position:absolute;left:1209.97px;top:233px;font-size:12.5px;line-height:1;font-weight:normal;color:#1c1c1c;white-space:nowrap;letter-spacing:0.000px;transform:scaleX(1.0691);transform-origin:0 0;-webkit-text-stroke:0.2px #1c1c1c;">39,672</div>
<div style="position:absolute;left:1315.50px;top:233px;font-size:12.5px;line-height:1;font-weight:normal;color:#1c1c1c;white-space:nowrap;letter-spacing:0.000px;transform:scaleX(1.0409);transform-origin:0 0;-webkit-text-stroke:0.2px #1c1c1c;">44,075</div>
<div style="position:absolute;left:1420.50px;top:233px;font-size:12.5px;line-height:1;font-weight:normal;color:#1c1c1c;white-space:nowrap;letter-spacing:0.000px;transform:scaleX(1.0409);transform-origin:0 0;-webkit-text-stroke:0.2px #1c1c1c;">48,968</div>
<div style="position:absolute;left:1524.97px;top:233px;font-size:12.5px;line-height:1;font-weight:normal;color:#1c1c1c;white-space:nowrap;letter-spacing:0.000px;transform:scaleX(1.0548);transform-origin:0 0;-webkit-text-stroke:0.2px #1c1c1c;">54,403</div>
<div style="position:absolute;left:1629.97px;top:233px;font-size:12.5px;line-height:1;font-weight:normal;color:#1c1c1c;white-space:nowrap;letter-spacing:0.000px;transform:scaleX(1.0691);transform-origin:0 0;-webkit-text-stroke:0.2px #1c1c1c;">60,442</div>
<div style="position:absolute;left:1734.97px;top:233px;font-size:12.5px;line-height:1;font-weight:normal;color:#1c1c1c;white-space:nowrap;letter-spacing:0.000px;transform:scaleX(1.0691);transform-origin:0 0;-webkit-text-stroke:0.2px #1c1c1c;">67,151</div>
<div style="position:absolute;left:1839.97px;top:229px;width:55.03px;height:22.5px;overflow:hidden"><div style="position:absolute;left:0;top:4px;font-size:12.5px;line-height:1;font-weight:normal;color:#1c1c1c;white-space:nowrap;letter-spacing:0.000px;transform:scaleX(1.0548);transform-origin:0 0;-webkit-text-stroke:0.2px #1c1c1c;">74,605</div></div>
<div style="position:absolute;left:484.40px;top:256px;font-size:12.5px;line-height:1;font-weight:normal;color:#1c1c1c;white-space:nowrap;letter-spacing:0.000px;transform:scaleX(1.1043);transform-origin:0 0;-webkit-text-stroke:0.2px #1c1c1c;">11008</div>
<div style="position:absolute;left:566.98px;top:256px;font-size:12.5px;line-height:1;font-weight:normal;color:#1c1c1c;white-space:nowrap;letter-spacing:0.000px;transform:scaleX(1.0462);transform-origin:0 0;-webkit-text-stroke:0.2px #1c1c1c;">Other Operating Income</div>
<div style="position:absolute;left:842.43px;top:256px;font-size:12.5px;line-height:1;font-weight:normal;color:#1c1c1c;white-space:nowrap;letter-spacing:0.000px;transform:scaleX(1.0680);transform-origin:0 0;-webkit-text-stroke:0.2px #1c1c1c;">132,164</div>
<div style="position:absolute;left:934.43px;top:256px;font-size:12.5px;line-height:1;font-weight:normal;color:#1c1c1c;white-space:nowrap;letter-spacing:0.000px;transform:scaleX(1.0680);transform-origin:0 0;-webkit-text-stroke:0.2px #1c1c1c;">146,835</div>
<div style="position:absolute;left:1026.43px;top:256px;font-size:12.5px;line-height:1;font-weight:normal;color:#1c1c1c;white-space:nowrap;letter-spacing:0.000px;transform:scaleX(1.0680);transform-origin:0 0;-webkit-text-stroke:0.2px #1c1c1c;">163,133</div>
<div style="position:absolute;left:1117.42px;top:256px;font-size:12.5px;line-height:1;font-weight:normal;color:#1c1c1c;white-space:nowrap;letter-spacing:-0.000px;transform:scaleX(1.0803);transform-origin:0 0;-webkit-text-stroke:0.2px #1c1c1c;">181,241</div>
<div style="position:absolute;left:1209.97px;top:256px;font-size:12.5px;line-height:1;font-weight:normal;color:#1c1c1c;white-space:nowrap;letter-spacing:0.000px;transform:scaleX(1.0680);transform-origin:0 0;-webkit-text-stroke:0.2px #1c1c1c;">201,359</div>
<div style="position:absolute;left:1314.97px;top:256px;font-size:12.5px;line-height:1;font-weight:normal;color:#1c1c1c;white-space:nowrap;letter-spacing:0.000px;transform:scaleX(1.0560);transform-origin:0 0;-webkit-text-stroke:0.2px #1c1c1c;">223,710</div>
<div style="position:absolute;left:1419.97px;top:256px;font-size:12.5px;line-height:1;font-weight:normal;color:#1c1c1c;white-space:nowrap;letter-spacing:0.000px;transform:scaleX(1.0680);transform-origin:0 0;-webkit-text-stroke:0.2px #1c1c1c;">248,541</div>
<div style="position:absolute;left:1524.97px;top:256px;font-size:12.5px;line-height:1;font-weight:normal;color:#1c1c1c;white-space:nowrap;letter-spacing:0.000px;transform:scaleX(1.0680);transform-origin:0 0;-webkit-text-stroke:0.2px #1c1c1c;">276,129</div>
<div style="position:absolute;left:1629.97px;top:256px;font-size:12.5px;line-height:1;font-weight:normal;color:#1c1c1c;white-space:nowrap;letter-spacing:0.000px;transform:scaleX(1.0560);transform-origin:0 0;-webkit-text-stroke:0.2px #1c1c1c;">306,780</div>
<div style="position:absolute;left:1734.97px;top:256px;font-size:12.5px;line-height:1;font-weight:normal;color:#1c1c1c;white-space:nowrap;letter-spacing:0.000px;transform:scaleX(1.0680);transform-origin:0 0;-webkit-text-stroke:0.2px #1c1c1c;">340,832</div>
<div style="position:absolute;left:1839.97px;top:252px;width:55.03px;height:22.5px;overflow:hidden"><div style="position:absolute;left:0;top:4px;font-size:12.5px;line-height:1;font-weight:normal;color:#1c1c1c;white-space:nowrap;letter-spacing:0.000px;transform:scaleX(1.0560);transform-origin:0 0;-webkit-text-stroke:0.2px #1c1c1c;">378,665</div></div>
<div style="position:absolute;left:484.41px;top:279px;font-size:12.5px;line-height:1;font-weight:normal;color:#1c1c1c;white-space:nowrap;letter-spacing:0.000px;transform:scaleX(1.0875);transform-origin:0 0;-webkit-text-stroke:0.2px #1c1c1c;">12009</div>
<div style="position:absolute;left:566.45px;top:279px;font-size:12.5px;line-height:1;font-weight:normal;color:#1c1c1c;white-space:nowrap;letter-spacing:0.000px;transform:scaleX(1.0462);transform-origin:0 0;-webkit-text-stroke:0.2px #1c1c1c;">Insurance Expense</div>
<div style="position:absolute;left:842.97px;top:279px;font-size:12.5px;line-height:1;font-weight:normal;color:#1c1c1c;white-space:nowrap;letter-spacing:0.000px;transform:scaleX(1.0560);transform-origin:0 0;-webkit-text-stroke:0.2px #1c1c1c;">693,810</div>
<div style="position:absolute;left:934.97px;top:279px;font-size:12.5px;line-height:1;font-weight:normal;color:#1c1c1c;white-space:nowrap;letter-spacing:0.000px;transform:scaleX(1.0560);transform-origin:0 0;-webkit-text-stroke:0.2px #1c1c1c;">770,823</div>
<div style="position:absolute;left:1026.98px;top:279px;font-size:12.5px;line-height:1;font-weight:normal;color:#1c1c1c;white-space:nowrap;letter-spacing:0.000px;transform:scaleX(1.0462);transform-origin:0 0;-webkit-text-stroke:0.2px #1c1c1c;">0</div>
<div style="position:absolute;left:1117.97px;top:279px;font-size:12.5px;line-height:1;font-weight:normal;color:#1c1c1c;white-space:nowrap;letter-spacing:0.000px;transform:scaleX(1.0560);transform-origin:0 0;-webkit-text-stroke:0.2px #1c1c1c;">951,443</div>
<div style="position:absolute;left:1209.42px;top:279px;font-size:12.5px;line-height:1;font-weight:normal;color:#1c1c1c;white-space:nowrap;letter-spacing:0.000px;transform:scaleX(1.0759);transform-origin:0 0;-webkit-text-stroke:0.2px #1c1c1c;">1,057,053</div>
<div style="position:absolute;left:1314.42px;top:279px;font-size:12.5px;line-height:1;font-weight:normal;color:#1c1c1c;white-space:nowrap;letter-spacing:0.000px;transform:scaleX(1.0759);transform-origin:0 0;-webkit-text-stroke:0.2px #1c1c1c;">1,174,386</div>
<div style="position:absolute;left:1419.42px;top:279px;font-size:12.5px;line-height:1;font-weight:normal;color:#1c1c1c;white-space:nowrap;letter-spacing:0.000px;transform:scaleX(1.0759);transform-origin:0 0;-webkit-text-stroke:0.2px #1c1c1c;">1,304,742</div>
<div style="position:absolute;left:1524.42px;top:279px;font-size:12.5px;line-height:1;font-weight:normal;color:#1c1c1c;white-space:nowrap;letter-spacing:0.000px;transform:scaleX(1.0759);transform-origin:0 0;-webkit-text-stroke:0.2px #1c1c1c;">1,449,569</div>
<div style="position:absolute;left:1629.42px;top:279px;font-size:12.5px;line-height:1;font-weight:normal;color:#1c1c1c;white-space:nowrap;letter-spacing:0.000px;transform:scaleX(1.0759);transform-origin:0 0;-webkit-text-stroke:0.2px #1c1c1c;">1,610,471</div>
<div style="position:absolute;left:1734.42px;top:279px;font-size:12.5px;line-height:1;font-weight:normal;color:#1c1c1c;white-space:nowrap;letter-spacing:0.000px;transform:scaleX(1.0759);transform-origin:0 0;-webkit-text-stroke:0.2px #1c1c1c;">1,789,233</div>
<div style="position:absolute;left:1839.42px;top:275px;width:55.58px;height:22.5px;overflow:hidden"><div style="position:absolute;left:0;top:4px;font-size:12.5px;line-height:1;font-weight:normal;color:#1c1c1c;white-space:nowrap;letter-spacing:0.000px;transform:scaleX(1.0759);transform-origin:0 0;-webkit-text-stroke:0.2px #1c1c1c;">1,987,838</div></div>
<div style="position:absolute;left:484.43px;top:302px;font-size:12.5px;line-height:1;font-weight:normal;color:#1c1c1c;white-space:nowrap;letter-spacing:0.000px;transform:scaleX(1.0713);transform-origin:0 0;-webkit-text-stroke:0.2px #1c1c1c;">13010</div>
<div style="position:absolute;left:566.45px;top:302px;font-size:12.5px;line-height:1;font-weight:normal;color:#1c1c1c;white-space:nowrap;letter-spacing:0.000px;transform:scaleX(1.0462);transform-origin:0 0;-webkit-text-stroke:0.2px #1c1c1c;">Income Tax Expense</div>
<div style="position:absolute;left:843.50px;top:302px;font-size:12.5px;line-height:1;font-weight:normal;color:#1c1c1c;white-space:nowrap;letter-spacing:0.000px;transform:scaleX(1.0560);transform-origin:0 0;-webkit-text-stroke:0.2px #1c1c1c;">465,217</div>
<div style="position:absolute;left:934.97px;top:302px;font-size:12.5px;line-height:1;font-weight:normal;color:#1c1c1c;white-space:nowrap;letter-spacing:0.000px;transform:scaleX(1.0560);transform-origin:0 0;-webkit-text-stroke:0.2px #1c1c1c;">516,856</div>
<div style="position:absolute;left:1026.97px;top:302px;font-size:12.5px;line-height:1;font-weight:normal;color:#1c1c1c;white-space:nowrap;letter-spacing:0.000px;transform:scaleX(1.0680);transform-origin:0 0;-webkit-text-stroke:0.2px #1c1c1c;">574,227</div>
<div style="position:absolute;left:1117.97px;top:302px;font-size:12.5px;line-height:1;font-weight:normal;color:#1c1c1c;white-space:nowrap;letter-spacing:0.000px;transform:scaleX(1.0560);transform-origin:0 0;-webkit-text-stroke:0.2px #1c1c1c;">637,966</div>
<div style="position:absolute;left:1209.97px;top:302px;font-size:12.5px;line-height:1;font-weight:normal;color:#1c1c1c;white-space:nowrap;letter-spacing:0.000px;transform:scaleX(1.0560);transform-origin:0 0;-webkit-text-stroke:0.2px #1c1c1c;">708,780</div>
<div style="position:absolute;left:1314.97px;top:302px;font-size:12.5px;line-height:1;font-weight:normal;color:#1c1c1c;white-space:nowrap;letter-spacing:0.000px;transform:scaleX(1.0560);transform-origin:0 0;-webkit-text-stroke:0.2px #1c1c1c;">787,455</div>
<div style="position:absolute;left:1419.97px;top:302px;font-size:12.5px;line-height:1;font-weight:normal;color:#1c1c1c;white-space:nowrap;letter-spacing:0.000px;transform:scaleX(1.0680);transform-origin:0 0;-webkit-text-stroke:0.2px #1c1c1c;">874,862</div>
<div style="position:absolute;left:1524.97px;top:302px;font-size:12.5px;line-height:1;font-weight:normal;color:#1c1c1c;white-space:nowrap;letter-spacing:0.000px;transform:scaleX(1.0680);transform-origin:0 0;-webkit-text-stroke:0.2px #1c1c1c;">971,972</div>
<div style="position:absolute;left:1629.42px;top:302px;font-size:12.5px;line-height:1;font-weight:normal;color:#1c1c1c;white-space:nowrap;letter-spacing:0.000px;transform:scaleX(1.0759);transform-origin:0 0;-webkit-text-stroke:0.2px #1c1c1c;">1,079,861</div>
<div style="position:absolute;left:1734.42px;top:302px;font-size:12.5px;line-height:1;font-weight:normal;color:#1c1c1c;white-space:nowrap;letter-spacing:0.000px;transform:scaleX(1.0759);transform-origin:0 0;-webkit-text-stroke:0.2px #1c1c1c;">1,199,725</div>
<div style="position:absolute;left:1839.42px;top:298px;width:55.58px;height:22.5px;overflow:hidden"><div style="position:absolute;left:0;top:4px;font-size:12.5px;line-height:1;font-weight:normal;color:#1c1c1c;white-space:nowrap;letter-spacing:0.000px;transform:scaleX(1.0759);transform-origin:0 0;-webkit-text-stroke:0.2px #1c1c1c;">1,332,895</div></div>
<div style="position:absolute;left:484.43px;top:325px;font-size:12.5px;line-height:1;font-weight:normal;color:#1c1c1c;white-space:nowrap;letter-spacing:0.000px;transform:scaleX(1.0736);transform-origin:0 0;-webkit-text-stroke:0.2px #1c1c1c;">1001</div>
<div style="position:absolute;left:566.98px;top:325px;font-size:12.5px;line-height:1;font-weight:normal;color:#1c1c1c;white-space:nowrap;letter-spacing:0.000px;transform:scaleX(1.0462);transform-origin:0 0;-webkit-text-stroke:0.2px #1c1c1c;">Cash and Cash Equivalents</div>
<div style="position:absolute;left:842.97px;top:325px;font-size:12.5px;line-height:1;font-weight:normal;color:#1c1c1c;white-space:nowrap;letter-spacing:0.000px;transform:scaleX(1.0680);transform-origin:0 0;-webkit-text-stroke:0.2px #1c1c1c;">710,599</div>
<div style="position:absolute;left:934.97px;top:325px;font-size:12.5px;line-height:1;font-weight:normal;color:#1c1c1c;white-space:nowrap;letter-spacing:0.000px;transform:scaleX(1.0560);transform-origin:0 0;-webkit-text-stroke:0.2px #1c1c1c;">789,476</div>
<div style="position:absolute;left:1026.97px;top:325px;font-size:12.5px;line-height:1;font-weight:normal;color:#1c1c1c;white-space:nowrap;letter-spacing:0.000px;transform:scaleX(1.0560);transform-origin:0 0;-webkit-text-stroke:0.2px #1c1c1c;">877,108</div>
<div style="position:absolute;left:1117.97px;top:325px;font-size:12.5px;line-height:1;font-weight:normal;color:#1c1c1c;white-space:nowrap;letter-spacing:0.000px;transform:scaleX(1.0560);transform-origin:0 0;-webkit-text-stroke:0.2px #1c1c1c;">974,466</div>
<div style="position:absolute;left:1209.42px;top:325px;font-size:12.5px;line-height:1;font-weight:normal;color:#1c1c1c;white-space:nowrap;letter-spacing:0.000px;transform:scaleX(1.0759);transform-origin:0 0;-webkit-text-stroke:0.2px #1c1c1c;">1,082,632</div>
<div style="position:absolute;left:1314.43px;top:325px;font-size:12.5px;line-height:1;font-weight:normal;color:#1c1c1c;white-space:nowrap;letter-spacing:0.000px;transform:scaleX(1.0660);transform-origin:0 0;-webkit-text-stroke:0.2px #1c1c1c;">1,202,804</div>
<div style="position:absolute;left:1419.42px;top:325px;font-size:12.5px;line-height:1;font-weight:normal;color:#1c1c1c;white-space:nowrap;letter-spacing:0.000px;transform:scaleX(1.0759);transform-origin:0 0;-webkit-text-stroke:0.2px #1c1c1c;">1,336,316</div>
<div style="position:absolute;left:1524.42px;top:325px;font-size:12.5px;line-height:1;font-weight:normal;color:#1c1c1c;white-space:nowrap;letter-spacing:0.000px;transform:scaleX(1.0759);transform-origin:0 0;-webkit-text-stroke:0.2px #1c1c1c;">1,484,647</div>
<div style="position:absolute;left:1629.42px;top:325px;font-size:12.5px;line-height:1;font-weight:normal;color:#1c1c1c;white-space:nowrap;letter-spacing:0.000px;transform:scaleX(1.0759);transform-origin:0 0;-webkit-text-stroke:0.2px #1c1c1c;">1,649,443</div>
<div style="position:absolute;left:1734.42px;top:325px;font-size:12.5px;line-height:1;font-weight:normal;color:#1c1c1c;white-space:nowrap;letter-spacing:0.000px;transform:scaleX(1.0759);transform-origin:0 0;-webkit-text-stroke:0.2px #1c1c1c;">1,832,531</div>
<div style="position:absolute;left:1839.97px;top:321px;width:55.03px;height:22.5px;overflow:hidden"><div style="position:absolute;left:0;top:4px;font-size:12.5px;line-height:1;font-weight:normal;color:#1c1c1c;white-space:nowrap;letter-spacing:0.000px;transform:scaleX(1.0660);transform-origin:0 0;-webkit-text-stroke:0.2px #1c1c1c;">2,035,942</div></div>
<div style="position:absolute;left:484.97px;top:348px;font-size:12.5px;line-height:1;font-weight:normal;color:#1c1c1c;white-space:nowrap;letter-spacing:-0.000px;transform:scaleX(1.0537);transform-origin:0 0;-webkit-text-stroke:0.2px #1c1c1c;">2002</div>
<div style="position:absolute;left:567.50px;top:348px;font-size:12.5px;line-height:1;font-weight:normal;color:#1c1c1c;white-space:nowrap;letter-spacing:0.000px;transform:scaleX(1.0462);transform-origin:0 0;-webkit-text-stroke:0.2px #1c1c1c;">Accounts Receivable</div>
<div style="position:absolute;left:842.41px;top:348px;font-size:12.5px;line-height:1;font-weight:normal;color:#1c1c1c;white-space:nowrap;letter-spacing:-0.000px;transform:scaleX(1.0929);transform-origin:0 0;-webkit-text-stroke:0.2px #1c1c1c;">117,094</div>
<div style="position:absolute;left:934.42px;top:348px;font-size:12.5px;line-height:1;font-weight:normal;color:#1c1c1c;white-space:nowrap;letter-spacing:-0.000px;transform:scaleX(1.0803);transform-origin:0 0;-webkit-text-stroke:0.2px #1c1c1c;">130,092</div>
<div style="position:absolute;left:1026.42px;top:348px;font-size:12.5px;line-height:1;font-weight:normal;color:#1c1c1c;white-space:nowrap;letter-spacing:-0.000px;transform:scaleX(1.0803);transform-origin:0 0;-webkit-text-stroke:0.2px #1c1c1c;">144,532</div>
<div style="position:absolute;left:1117.43px;top:348px;font-size:12.5px;line-height:1;font-weight:normal;color:#1c1c1c;white-space:nowrap;letter-spacing:0.000px;transform:scaleX(1.0680);transform-origin:0 0;-webkit-text-stroke:0.2px #1c1c1c;">160,575</div>
<div style="position:absolute;left:1209.42px;top:348px;font-size:12.5px;line-height:1;font-weight:normal;color:#1c1c1c;white-space:nowrap;letter-spacing:-0.000px;transform:scaleX(1.0803);transform-origin:0 0;-webkit-text-stroke:0.2px #1c1c1c;">178,399</div>
<div style="position:absolute;left:1314.42px;top:348px;font-size:12.5px;line-height:1;font-weight:normal;color:#1c1c1c;white-space:nowrap;letter-spacing:-0.000px;transform:scaleX(1.0803);transform-origin:0 0;-webkit-text-stroke:0.2px #1c1c1c;">198,201</div>
<div style="position:absolute;left:1419.97px;top:348px;font-size:12.5px;line-height:1;font-weight:normal;color:#1c1c1c;white-space:nowrap;letter-spacing:0.000px;transform:scaleX(1.0680);transform-origin:0 0;-webkit-text-stroke:0.2px #1c1c1c;">220,202</div>
<div style="position:absolute;left:1524.97px;top:348px;font-size:12.5px;line-height:1;font-weight:normal;color:#1c1c1c;white-space:nowrap;letter-spacing:0.000px;transform:scaleX(1.0560);transform-origin:0 0;-webkit-text-stroke:0.2px #1c1c1c;">244,644</div>
<div style="position:absolute;left:1629.98px;top:348px;font-size:12.5px;line-height:1;font-weight:normal;color:#1c1c1c;white-space:nowrap;letter-spacing:0.000px;transform:scaleX(1.0462);transform-origin:0 0;-webkit-text-stroke:0.2px #1c1c1c;">0</div>
<div style="position:absolute;left:1734.97px;top:348px;font-size:12.5px;line-height:1;font-weight:normal;color:#1c1c1c;white-space:nowrap;letter-spacing:0.000px;transform:scaleX(1.0680);transform-origin:0 0;-webkit-text-stroke:0.2px #1c1c1c;">301,969</div>
<div style="position:absolute;left:1839.97px;top:344px;width:55.03px;height:22.5px;overflow:hidden"><div style="position:absolute;left:0;top:4px;font-size:12.5px;line-height:1;font-weight:normal;color:#1c1c1c;white-space:nowrap;letter-spacing:0.000px;transform:scaleX(1.0560);transform-origin:0 0;-webkit-text-stroke:0.2px #1c1c1c;">335,488</div></div>
<div style="position:absolute;left:484.43px;top:371px;font-size:12.5px;line-height:1;font-weight:normal;color:#1c1c1c;white-space:nowrap;letter-spacing:0.000px;transform:scaleX(1.0713);transform-origin:0 0;-webkit-text-stroke:0.2px #1c1c1c;">10010</div>
<div style="position:absolute;left:567.50px;top:371px;font-size:12.5px;line-height:1;font-weight:normal;color:#1c1c1c;white-space:nowrap;letter-spacing:0.000px;transform:scaleX(1.0462);transform-origin:0 0;-webkit-text-stroke:0.2px #1c1c1c;">Accrued Liabilities</div>
<div style="position:absolute;left:843.50px;top:371px;font-size:12.5px;line-height:1;font-weight:normal;color:#1c1c1c;white-space:nowrap;letter-spacing:0.000px;transform:scaleX(1.0409);transform-origin:0 0;-webkit-text-stroke:0.2px #1c1c1c;">41,096</div>
<div style="position:absolute;left:935.50px;top:371px;font-size:12.5px;line-height:1;font-weight:normal;color:#1c1c1c;white-space:nowrap;letter-spacing:0.000px;transform:scaleX(1.0548);transform-origin:0 0;-webkit-text-stroke:0.2px #1c1c1c;">45,657</div>
<div style="position:absolute;left:1026.97px;top:371px;font-size:12.5px;line-height:1;font-weight:normal;color:#1c1c1c;white-space:nowrap;letter-spacing:0.000px;transform:scaleX(1.0548);transform-origin:0 0;-webkit-text-stroke:0.2px #1c1c1c;">50,725</div>
<div style="position:absolute;left:1117.98px;top:371px;font-size:12.5px;line-height:1;font-weight:normal;color:#1c1c1c;white-space:nowrap;letter-spacing:0.000px;transform:scaleX(1.0462);transform-origin:0 0;-webkit-text-stroke:0.2px #1c1c1c;">0</div>
<div style="position:absolute;left:1209.96px;top:371px;font-size:12.5px;line-height:1;font-weight:normal;color:#1c1c1c;white-space:nowrap;letter-spacing:0.000px;transform:scaleX(1.0837);transform-origin:0 0;-webkit-text-stroke:0.2px #1c1c1c;">62,611</div>
<div style="position:absolute;left:1314.97px;top:371px;font-size:12.5px;line-height:1;font-weight:normal;color:#1c1c1c;white-space:nowrap;letter-spacing:0.000px;transform:scaleX(1.0691);transform-origin:0 0;-webkit-text-stroke:0.2px #1c1c1c;">69,561</div>
<div style="position:absolute;left:1419.97px;top:371px;font-size:12.5px;line-height:1;font-weight:normal;color:#1c1c1c;white-space:nowrap;letter-spacing:0.000px;transform:scaleX(1.0691);transform-origin:0 0;-webkit-text-stroke:0.2px #1c1c1c;">77,282</div>
<div style="position:absolute;left:1524.97px;top:371px;font-size:12.5px;line-height:1;font-weight:normal;color:#1c1c1c;white-space:nowrap;letter-spacing:0.000px;transform:scaleX(1.0548);transform-origin:0 0;-webkit-text-stroke:0.2px #1c1c1c;">85,860</div>
<div style="position:absolute;left:1629.97px;top:371px;font-size:12.5px;line-height:1;font-weight:normal;color:#1c1c1c;white-space:nowrap;letter-spacing:0.000px;transform:scaleX(1.0691);transform-origin:0 0;-webkit-text-stroke:0.2px #1c1c1c;">95,391</div>
<div style="position:absolute;left:1734.42px;top:371px;font-size:12.5px;line-height:1;font-weight:normal;color:#1c1c1c;white-space:nowrap;letter-spacing:-0.000px;transform:scaleX(1.0803);transform-origin:0 0;-webkit-text-stroke:0.2px #1c1c1c;">105,979</div>
<div style="position:absolute;left:1839.41px;top:367px;width:55.59px;height:22.5px;overflow:hidden"><div style="position:absolute;left:0;top:4px;font-size:12.5px;line-height:1;font-weight:normal;color:#1c1c1c;white-space:nowrap;letter-spacing:-0.000px;transform:scaleX(1.0929);transform-origin:0 0;-webkit-text-stroke:0.2px #1c1c1c;">117,743</div></div>
<div style="position:absolute;left:1896px;top:85px;width:24px;height:436px;background:#ffffff"></div>
<div style="position:absolute;left:1896px;top:85px;width:1px;height:436px;background:#e4e3e8"></div>
<div style="position:absolute;left:1896px;top:108px;width:24px;height:1px;background:#ececf0"></div>
<svg style="position:absolute;left:1903px;top:94.5px;overflow:visible;" width="10" height="5.5" viewBox="0 0 10 5.5"><path d="M0 5.5 L5.0 0 L10 5.5 Z" fill="#111"/></svg>
<div style="position:absolute;left:1904px;top:116px;width:8px;height:129px;background:#d6d4dc;border-radius:4px"></div>
<div style="position:absolute;left:1896px;top:497px;width:24px;height:1px;background:#ececf0"></div>
<svg style="position:absolute;left:1903.5px;top:506.3px;overflow:visible;" width="9.5" height="5.5" viewBox="0 0 9.5 5.5"><path d="M0 0 L9.5 0 L4.75 5.5 Z" fill="#111"/></svg>
<div style="position:absolute;left:440px;top:522px;width:1480px;height:23px;background:#ffffff"></div>
<div style="position:absolute;left:464px;top:522px;width:1px;height:23px;background:#ececf0"></div>
<svg style="position:absolute;left:449.3px;top:527.6px;overflow:visible;" width="5.4" height="9" viewBox="0 0 5.4 9"><path d="M5.4 0 L0 4.5 L5.4 9 Z" fill="#111"/></svg>
<div style="position:absolute;left:471.5px;top:529px;width:796px;height:7.5px;background:#dcdae1;border-radius:4px"></div>
<div style="position:absolute;left:1871px;top:522px;width:1px;height:23px;background:#ececf0"></div>
<div style="position:absolute;left:1895px;top:522px;width:1px;height:23px;background:#ececf0"></div>
<svg style="position:absolute;left:1881.8px;top:527.7px;overflow:visible;" width="5.6" height="9.3" viewBox="0 0 5.6 9.3"><path d="M0 0 L5.6 4.65 L0 9.3 Z" fill="#111"/></svg>
<div style="position:absolute;left:440px;top:545px;width:1480px;height:1px;background:#d9d7de"></div>
<svg style="position:absolute;left:465px;top:559px;overflow:visible;" width="14" height="15" viewBox="0 0 14 15"><path d="M1 1.2 H13 L8.7 7.8 V14 L5.3 12.0 V7.8 Z" fill="none" stroke="#3c3c46" stroke-width="1.5" stroke-linejoin="round"/></svg>
<svg style="position:absolute;left:509.20000000000005px;top:558px;overflow:visible;" width="6" height="17.2" viewBox="0 0 6 17.2"><circle cx="3" cy="3.0" r="2" fill="#3c3c46"/><circle cx="3" cy="8.6" r="2" fill="#3c3c46"/><circle cx="3" cy="14.2" r="2" fill="#3c3c46"/></svg>
<svg style="position:absolute;left:547px;top:561px;overflow:visible;" width="9" height="11" viewBox="0 0 9 11"><path d="M7.2 1 L2 5.5 L7.2 10" fill="none" stroke="#3c3c46" stroke-width="1.5"/></svg>
<svg style="position:absolute;left:588px;top:561px;overflow:visible;" width="9" height="11" viewBox="0 0 9 11"><path d="M1.8 1 L7 5.5 L1.8 10" fill="none" stroke="#3c3c46" stroke-width="1.5"/></svg>
<div style="position:absolute;left:616.5px;top:546px;width:1px;height:39px;background:#8e8c96"></div>
<div style="position:absolute;left:632.58px;top:559px;font-size:14.8px;line-height:1;font-weight:bold;color:#35353f;white-space:nowrap;letter-spacing:0.000px;transform:scaleX(0.9211);transform-origin:0 0;">US</div>
<div style="position:absolute;left:667px;top:546px;width:1px;height:39px;background:#8e8c96"></div>
<div style="position:absolute;left:683.78px;top:559px;font-size:14.8px;line-height:1;font-weight:bold;color:#35353f;white-space:nowrap;letter-spacing:-0.652px;transform:scaleX(0.9200);transform-origin:0 0;">UK</div>
<div style="position:absolute;left:719px;top:546px;width:1px;height:39px;background:#8e8c96"></div>
<div style="position:absolute;left:720px;top:545px;width:63px;height:40px;background:#ffffff"></div>
<div style="position:absolute;left:736.12px;top:559px;font-size:14.8px;line-height:1;font-weight:bold;color:#45454f;white-space:nowrap;letter-spacing:0.000px;transform:scaleX(0.9677);transform-origin:0 0;">CAD</div>
<svg style="position:absolute;left:1815px;top:557px;overflow:visible;" width="18" height="18" viewBox="0 0 18 18"><circle cx="9" cy="9" r="7.4" fill="none" stroke="#5e5e68" stroke-width="1.5"/><path d="M5.2 9 H12.8" stroke="#5e5e68" stroke-width="1.6"/></svg>
<svg style="position:absolute;left:1847px;top:557px;overflow:visible;" width="18" height="18" viewBox="0 0 18 18"><circle cx="7.4" cy="7.4" r="5.4" fill="none" stroke="#5e5e68" stroke-width="1.8"/><path d="M11.4 11.4 L16.2 16.2" stroke="#5e5e68" stroke-width="2"/></svg>
<svg style="position:absolute;left:1879px;top:557px;overflow:visible;" width="18" height="18" viewBox="0 0 18 18"><circle cx="9" cy="9" r="7.4" fill="none" stroke="#5e5e68" stroke-width="1.5"/><path d="M5.2 9 H12.8 M9 5.2 V12.8" stroke="#5e5e68" stroke-width="1.6"/></svg>
<div style="position:absolute;left:440px;top:585px;width:1480px;height:327px;background:#ffffff;border-radius:14px 14px 0 0;border-top:1px solid #dcdae1;box-sizing:border-box"></div>
<div style="position:absolute;left:1127px;top:593px;width:106px;height:6px;background:#e0dee4;border-radius:3px"></div>
<div style="position:absolute;left:456.49px;top:608px;font-size:15px;line-height:1;font-weight:bold;color:#2a2832;white-space:nowrap;letter-spacing:0.000px;transform:scaleX(1.0132);transform-origin:0 0;">Mapped fields</div>
<div style="position:absolute;left:589px;top:608px;width:30px;height:16px;background:#4b3bc9;border-radius:8px"></div>
<svg style="position:absolute;left:602px;top:608px;overflow:visible;" width="17" height="16" viewBox="0 0 17 16"><circle cx="8.6" cy="8" r="6.6" fill="#fff" stroke="#4b3bc9" stroke-width="1.4"/></svg>
<div style="position:absolute;left:622.39px;top:609px;font-size:13.8px;line-height:1;font-weight:normal;color:#55536f;white-space:nowrap;letter-spacing:-0.000px;transform:scaleX(1.0058);transform-origin:0 0;-webkit-text-stroke:0.55px #55536f;">Real time update</div>
<svg style="position:absolute;left:743px;top:607.5px;overflow:visible;" width="18" height="18" viewBox="0 0 18 18"><path d="M14.2 5 A6.8 6.8 0 1 0 15.4 9.8" fill="none" stroke="#5a5a64" stroke-width="1.7"/><path d="M10.6 5.4 L16 6.1 L16.2 0.9 Z" fill="#5a5a64"/></svg>
<svg style="position:absolute;left:1840px;top:608px;overflow:visible;" width="17" height="16" viewBox="0 0 17 16"><rect x="1" y="1" width="14.6" height="14" fill="none" stroke="#5e5e68" stroke-width="1.5"/><path d="M1 4.6 H15.6 M5.9 4.6 V15 M10.7 4.6 V15" stroke="#5e5e68" stroke-width="1.4"/></svg>
<svg style="position:absolute;left:1879px;top:607px;overflow:visible;" width="18" height="18" viewBox="0 0 18 18"><path d="M10.4 1.6 H16.4 V7.6 M16.4 1.6 L10 8 M7.6 16.4 H1.6 V10.4 M1.6 16.4 L8 10" fill="none" stroke="#5e5e68" stroke-width="1.5"/></svg>
<div style="position:absolute;left:456px;top:638px;width:214px;height:41px;background:#e6e1fb;border-top-left-radius:4px"></div>
<div style="position:absolute;left:670px;top:638px;width:283px;height:41px;background:#e6e1fb"></div>
<div style="position:absolute;left:953px;top:638px;width:227px;height:41px;background:#fcd8ea"></div>
<div style="position:absolute;left:1180px;top:638px;width:251px;height:41px;background:#fcd8ea"></div>
<div style="position:absolute;left:1431px;top:638px;width:225px;height:41px;background:#fdeedd"></div>
<div style="position:absolute;left:1656px;top:638px;width:194px;height:41px;background:#fdeedd"></div>
<div style="position:absolute;left:1850px;top:638px;width:45px;height:41px;background:#fdeedd"></div>
<div style="position:absolute;left:456px;top:679px;width:1439px;height:209px;background:#ffffff"></div>
<div style="position:absolute;left:670px;top:638px;width:1px;height:250px;background:#8c8b93"></div>
<div style="position:absolute;left:953px;top:638px;width:1px;height:250px;background:#8c8b93"></div>
<div style="position:absolute;left:1180px;top:638px;width:1px;height:250px;background:#8c8b93"></div>
<div style="position:absolute;left:1431px;top:638px;width:1px;height:250px;background:#8c8b93"></div>
<div style="position:absolute;left:1656px;top:638px;width:1px;height:250px;background:#8c8b93"></div>
<div style="position:absolute;left:1850px;top:638px;width:1px;height:250px;background:#8c8b93"></div>
<div style="position:absolute;left:456px;top:638px;width:1px;height:250px;background:#ebeaef"></div>
<svg style="position:absolute;left:467.3px;top:653.5px;overflow:visible;" width="18" height="12" viewBox="0 0 18 12"><text x="0" y="11" font-family="Liberation Sans" font-size="8.2" fill="#6f6f7f">A</text><text x="5.6" y="6.6" font-family="Liberation Sans" font-size="8.2" fill="#6f6f7f">B</text><text x="11.4" y="11.4" font-family="Liberation Sans" font-size="8.2" fill="#6f6f7f">C</text></svg>
<div style="position:absolute;left:493.32px;top:651px;font-size:15.2px;line-height:1;font-weight:bold;color:#2a2832;white-space:nowrap;letter-spacing:0.000px;transform:scaleX(0.9582);transform-origin:0 0;">Account ID</div>
<svg style="position:absolute;left:603.5px;top:651.5px;overflow:visible;" width="14" height="15" viewBox="0 0 14 15"><path d="M1 1.2 H13 L8.7 7.8 V14 L5.3 12.0 V7.8 Z" fill="none" stroke="#3c3c46" stroke-width="1.5" stroke-linejoin="round"/></svg>
<svg style="position:absolute;left:638px;top:651px;overflow:visible;" width="16.5" height="16.5" viewBox="0 0 16.5 16.5"><path d="M6.89 3.18 L7.06 2.87 L7.18 2.17 L7.35 1.41 L7.61 0.96 L7.93 0.91 L8.25 0.90 L8.57 0.91 L8.89 0.93 L9.21 0.96 L9.53 1.01 L9.84 1.09 L10.06 1.51 L10.14 2.27 L10.16 3.01 L10.26 3.40 L10.47 3.49 L10.67 3.59 L10.88 3.70 L11.07 3.82 L11.26 3.95 L11.45 4.08 L11.62 4.23 L11.80 4.38 L11.96 4.54 L12.32 4.52 L12.98 4.28 L13.73 4.05 L14.25 4.05 L14.45 4.30 L14.62 4.58 L14.77 4.86 L14.91 5.14 L15.04 5.44 L15.16 5.74 L15.25 6.04 L14.99 6.44 L14.37 6.89 L13.74 7.28 L13.46 7.56 L13.48 7.79 L13.50 8.02 L13.50 8.25 L13.50 8.48 L13.48 8.71 L13.46 8.94 L13.42 9.16 L13.38 9.39 L13.32 9.61 L13.51 9.91 L14.06 10.36 L14.63 10.89 L14.89 11.34 L14.77 11.64 L14.62 11.93 L14.45 12.20 L14.27 12.47 L14.08 12.72 L13.88 12.97 L13.66 13.21 L13.18 13.18 L12.49 12.87 L11.84 12.52 L11.45 12.42 L11.26 12.55 L11.07 12.68 L10.88 12.80 L10.67 12.91 L10.47 13.01 L10.26 13.10 L10.05 13.18 L9.83 13.26 L9.61 13.32 L9.44 13.63 L9.32 14.33 L9.15 15.09 L8.89 15.54 L8.57 15.59 L8.25 15.60 L7.93 15.59 L7.61 15.57 L7.29 15.54 L6.97 15.49 L6.66 15.41 L6.44 14.99 L6.36 14.23 L6.34 13.49 L6.24 13.10 L6.03 13.01 L5.83 12.91 L5.63 12.80 L5.43 12.68 L5.24 12.55 L5.05 12.42 L4.88 12.27 L4.70 12.12 L4.54 11.96 L4.18 11.98 L3.52 12.22 L2.77 12.45 L2.25 12.45 L2.05 12.20 L1.88 11.92 L1.73 11.64 L1.59 11.36 L1.46 11.06 L1.34 10.76 L1.25 10.46 L1.51 10.06 L2.13 9.61 L2.76 9.22 L3.04 8.94 L3.02 8.71 L3.00 8.48 L3.00 8.25 L3.00 8.02 L3.02 7.79 L3.04 7.56 L3.08 7.34 L3.12 7.11 L3.18 6.89 L2.99 6.59 L2.44 6.14 L1.87 5.61 L1.61 5.16 L1.73 4.86 L1.88 4.58 L2.05 4.30 L2.23 4.03 L2.42 3.78 L2.62 3.53 L2.84 3.29 L3.32 3.32 L4.01 3.63 L4.66 3.98 L5.05 4.08 L5.24 3.95 L5.43 3.82 L5.63 3.70 L5.83 3.59 L6.03 3.49 L6.24 3.40 L6.45 3.32 L6.67 3.24 L6.89 3.18 Z" fill="none" stroke="#3c3c46" stroke-width="1.6" stroke-linejoin="round"/><circle cx="8.25" cy="8.25" r="2.72" fill="none" stroke="#3c3c46" stroke-width="1.6"/></svg>
<svg style="position:absolute;left:681.6px;top:653.5px;overflow:visible;" width="18" height="12" viewBox="0 0 18 12"><text x="0" y="11" font-family="Liberation Sans" font-size="8.2" fill="#6f6f7f">A</text><text x="5.6" y="6.6" font-family="Liberation Sans" font-size="8.2" fill="#6f6f7f">B</text><text x="11.4" y="11.4" font-family="Liberation Sans" font-size="8.2" fill="#6f6f7f">C</text></svg>
<div style="position:absolute;left:707.10px;top:651px;font-size:15.2px;line-height:1;font-weight:bold;color:#2a2832;white-space:nowrap;letter-spacing:0.000px;transform:scaleX(0.9943);transform-origin:0 0;">Account Name</div>
<svg style="position:absolute;left:886.4px;top:651.5px;overflow:visible;" width="14" height="15" viewBox="0 0 14 15"><path d="M1 1.2 H13 L8.7 7.8 V14 L5.3 12.0 V7.8 Z" fill="none" stroke="#3c3c46" stroke-width="1.5" stroke-linejoin="round"/></svg>
<svg style="position:absolute;left:921.4px;top:651px;overflow:visible;" width="16.5" height="16.5" viewBox="0 0 16.5 16.5"><path d="M6.89 3.18 L7.06 2.87 L7.18 2.17 L7.35 1.41 L7.61 0.96 L7.93 0.91 L8.25 0.90 L8.57 0.91 L8.89 0.93 L9.21 0.96 L9.53 1.01 L9.84 1.09 L10.06 1.51 L10.14 2.27 L10.16 3.01 L10.26 3.40 L10.47 3.49 L10.67 3.59 L10.88 3.70 L11.07 3.82 L11.26 3.95 L11.45 4.08 L11.62 4.23 L11.80 4.38 L11.96 4.54 L12.32 4.52 L12.98 4.28 L13.73 4.05 L14.25 4.05 L14.45 4.30 L14.62 4.58 L14.77 4.86 L14.91 5.14 L15.04 5.44 L15.16 5.74 L15.25 6.04 L14.99 6.44 L14.37 6.89 L13.74 7.28 L13.46 7.56 L13.48 7.79 L13.50 8.02 L13.50 8.25 L13.50 8.48 L13.48 8.71 L13.46 8.94 L13.42 9.16 L13.38 9.39 L13.32 9.61 L13.51 9.91 L14.06 10.36 L14.63 10.89 L14.89 11.34 L14.77 11.64 L14.62 11.93 L14.45 12.20 L14.27 12.47 L14.08 12.72 L13.88 12.97 L13.66 13.21 L13.18 13.18 L12.49 12.87 L11.84 12.52 L11.45 12.42 L11.26 12.55 L11.07 12.68 L10.88 12.80 L10.67 12.91 L10.47 13.01 L10.26 13.10 L10.05 13.18 L9.83 13.26 L9.61 13.32 L9.44 13.63 L9.32 14.33 L9.15 15.09 L8.89 15.54 L8.57 15.59 L8.25 15.60 L7.93 15.59 L7.61 15.57 L7.29 15.54 L6.97 15.49 L6.66 15.41 L6.44 14.99 L6.36 14.23 L6.34 13.49 L6.24 13.10 L6.03 13.01 L5.83 12.91 L5.63 12.80 L5.43 12.68 L5.24 12.55 L5.05 12.42 L4.88 12.27 L4.70 12.12 L4.54 11.96 L4.18 11.98 L3.52 12.22 L2.77 12.45 L2.25 12.45 L2.05 12.20 L1.88 11.92 L1.73 11.64 L1.59 11.36 L1.46 11.06 L1.34 10.76 L1.25 10.46 L1.51 10.06 L2.13 9.61 L2.76 9.22 L3.04 8.94 L3.02 8.71 L3.00 8.48 L3.00 8.25 L3.00 8.02 L3.02 7.79 L3.04 7.56 L3.08 7.34 L3.12 7.11 L3.18 6.89 L2.99 6.59 L2.44 6.14 L1.87 5.61 L1.61 5.16 L1.73 4.86 L1.88 4.58 L2.05 4.30 L2.23 4.03 L2.42 3.78 L2.62 3.53 L2.84 3.29 L3.32 3.32 L4.01 3.63 L4.66 3.98 L5.05 4.08 L5.24 3.95 L5.43 3.82 L5.63 3.70 L5.83 3.59 L6.03 3.49 L6.24 3.40 L6.45 3.32 L6.67 3.24 L6.89 3.18 Z" fill="none" stroke="#3c3c46" stroke-width="1.6" stroke-linejoin="round"/><circle cx="8.25" cy="8.25" r="2.72" fill="none" stroke="#3c3c46" stroke-width="1.6"/></svg>
<svg style="position:absolute;left:829px;top:651.5px;overflow:visible;" width="17" height="15" viewBox="0 0 17 15"><circle cx="4.2" cy="10" r="3.3" fill="none" stroke="#6f6f7f" stroke-width="1.5"/><circle cx="12.6" cy="10" r="3.3" fill="none" stroke="#6f6f7f" stroke-width="1.5"/><path d="M1.2 9 L3.6 2.4 Q4.4 1 6 1.4 L7 9 M15.6 9 L13.2 2.4 Q12.4 1 10.8 1.4 L9.8 9 M7 7 H9.8" fill="none" stroke="#6f6f7f" stroke-width="1.5"/></svg>
<svg style="position:absolute;left:968px;top:653px;overflow:visible;" width="13" height="12" viewBox="0 0 13 12"><rect x="0.7" y="0.7" width="11.6" height="10.6" fill="none" stroke="#6f6f7f" stroke-width="1.2"/><path d="M0.7 3.6 H12.3 M0.7 6.4 H12.3 M0.7 9 H12.3 M3.8 3.6 V11.3 M6.5 3.6 V11.3 M9.3 3.6 V11.3" stroke="#6f6f7f" stroke-width="0.8"/></svg>
<div style="position:absolute;left:989.62px;top:651px;font-size:15.2px;line-height:1;font-weight:bold;color:#2a2832;white-space:nowrap;letter-spacing:0.000px;transform:scaleX(0.9781);transform-origin:0 0;">Posting Date</div>
<svg style="position:absolute;left:1112.5px;top:651.5px;overflow:visible;" width="14" height="15" viewBox="0 0 14 15"><defs><linearGradient id="fg2" x1="0" y1="0" x2="0" y2="1"><stop offset="0.27" stop-color="#ffffff" stop-opacity="0"/><stop offset="0.27" stop-color="#6f64d4"/><stop offset="1" stop-color="#6f64d4"/></linearGradient></defs><path d="M1 1.2 H13 L8.7 7.8 V14 L5.3 12.0 V7.8 Z" fill="url(#fg2)" stroke="#15152a" stroke-width="1.7" stroke-linejoin="round"/></svg>
<svg style="position:absolute;left:1147.9px;top:651px;overflow:visible;" width="16.5" height="16.5" viewBox="0 0 16.5 16.5"><path d="M6.89 3.18 L7.06 2.87 L7.18 2.17 L7.35 1.41 L7.61 0.96 L7.93 0.91 L8.25 0.90 L8.57 0.91 L8.89 0.93 L9.21 0.96 L9.53 1.01 L9.84 1.09 L10.06 1.51 L10.14 2.27 L10.16 3.01 L10.26 3.40 L10.47 3.49 L10.67 3.59 L10.88 3.70 L11.07 3.82 L11.26 3.95 L11.45 4.08 L11.62 4.23 L11.80 4.38 L11.96 4.54 L12.32 4.52 L12.98 4.28 L13.73 4.05 L14.25 4.05 L14.45 4.30 L14.62 4.58 L14.77 4.86 L14.91 5.14 L15.04 5.44 L15.16 5.74 L15.25 6.04 L14.99 6.44 L14.37 6.89 L13.74 7.28 L13.46 7.56 L13.48 7.79 L13.50 8.02 L13.50 8.25 L13.50 8.48 L13.48 8.71 L13.46 8.94 L13.42 9.16 L13.38 9.39 L13.32 9.61 L13.51 9.91 L14.06 10.36 L14.63 10.89 L14.89 11.34 L14.77 11.64 L14.62 11.93 L14.45 12.20 L14.27 12.47 L14.08 12.72 L13.88 12.97 L13.66 13.21 L13.18 13.18 L12.49 12.87 L11.84 12.52 L11.45 12.42 L11.26 12.55 L11.07 12.68 L10.88 12.80 L10.67 12.91 L10.47 13.01 L10.26 13.10 L10.05 13.18 L9.83 13.26 L9.61 13.32 L9.44 13.63 L9.32 14.33 L9.15 15.09 L8.89 15.54 L8.57 15.59 L8.25 15.60 L7.93 15.59 L7.61 15.57 L7.29 15.54 L6.97 15.49 L6.66 15.41 L6.44 14.99 L6.36 14.23 L6.34 13.49 L6.24 13.10 L6.03 13.01 L5.83 12.91 L5.63 12.80 L5.43 12.68 L5.24 12.55 L5.05 12.42 L4.88 12.27 L4.70 12.12 L4.54 11.96 L4.18 11.98 L3.52 12.22 L2.77 12.45 L2.25 12.45 L2.05 12.20 L1.88 11.92 L1.73 11.64 L1.59 11.36 L1.46 11.06 L1.34 10.76 L1.25 10.46 L1.51 10.06 L2.13 9.61 L2.76 9.22 L3.04 8.94 L3.02 8.71 L3.00 8.48 L3.00 8.25 L3.00 8.02 L3.02 7.79 L3.04 7.56 L3.08 7.34 L3.12 7.11 L3.18 6.89 L2.99 6.59 L2.44 6.14 L1.87 5.61 L1.61 5.16 L1.73 4.86 L1.88 4.58 L2.05 4.30 L2.23 4.03 L2.42 3.78 L2.62 3.53 L2.84 3.29 L3.32 3.32 L4.01 3.63 L4.66 3.98 L5.05 4.08 L5.24 3.95 L5.43 3.82 L5.63 3.70 L5.83 3.59 L6.03 3.49 L6.24 3.40 L6.45 3.32 L6.67 3.24 L6.89 3.18 Z" fill="none" stroke="#3c3c46" stroke-width="1.6" stroke-linejoin="round"/><circle cx="8.25" cy="8.25" r="2.72" fill="none" stroke="#3c3c46" stroke-width="1.6"/></svg>
<svg style="position:absolute;left:1194.4px;top:654.5px;overflow:visible;" width="14" height="10" viewBox="0 0 14 10"><text x="0" y="8" font-family="Liberation Sans" font-size="8.5" fill="#6f6f7f">1.2</text></svg>
<div style="position:absolute;left:1216.72px;top:651px;font-size:15.2px;line-height:1;font-weight:bold;color:#2a2832;white-space:nowrap;letter-spacing:0.000px;transform:scaleX(0.9818);transform-origin:0 0;">Posting Amount</div>
<svg style="position:absolute;left:1364.3px;top:651.5px;overflow:visible;" width="14" height="15" viewBox="0 0 14 15"><path d="M1 1.2 H13 L8.7 7.8 V14 L5.3 12.0 V7.8 Z" fill="none" stroke="#3c3c46" stroke-width="1.5" stroke-linejoin="round"/></svg>
<svg style="position:absolute;left:1399.4px;top:651px;overflow:visible;" width="16.5" height="16.5" viewBox="0 0 16.5 16.5"><path d="M6.89 3.18 L7.06 2.87 L7.18 2.17 L7.35 1.41 L7.61 0.96 L7.93 0.91 L8.25 0.90 L8.57 0.91 L8.89 0.93 L9.21 0.96 L9.53 1.01 L9.84 1.09 L10.06 1.51 L10.14 2.27 L10.16 3.01 L10.26 3.40 L10.47 3.49 L10.67 3.59 L10.88 3.70 L11.07 3.82 L11.26 3.95 L11.45 4.08 L11.62 4.23 L11.80 4.38 L11.96 4.54 L12.32 4.52 L12.98 4.28 L13.73 4.05 L14.25 4.05 L14.45 4.30 L14.62 4.58 L14.77 4.86 L14.91 5.14 L15.04 5.44 L15.16 5.74 L15.25 6.04 L14.99 6.44 L14.37 6.89 L13.74 7.28 L13.46 7.56 L13.48 7.79 L13.50 8.02 L13.50 8.25 L13.50 8.48 L13.48 8.71 L13.46 8.94 L13.42 9.16 L13.38 9.39 L13.32 9.61 L13.51 9.91 L14.06 10.36 L14.63 10.89 L14.89 11.34 L14.77 11.64 L14.62 11.93 L14.45 12.20 L14.27 12.47 L14.08 12.72 L13.88 12.97 L13.66 13.21 L13.18 13.18 L12.49 12.87 L11.84 12.52 L11.45 12.42 L11.26 12.55 L11.07 12.68 L10.88 12.80 L10.67 12.91 L10.47 13.01 L10.26 13.10 L10.05 13.18 L9.83 13.26 L9.61 13.32 L9.44 13.63 L9.32 14.33 L9.15 15.09 L8.89 15.54 L8.57 15.59 L8.25 15.60 L7.93 15.59 L7.61 15.57 L7.29 15.54 L6.97 15.49 L6.66 15.41 L6.44 14.99 L6.36 14.23 L6.34 13.49 L6.24 13.10 L6.03 13.01 L5.83 12.91 L5.63 12.80 L5.43 12.68 L5.24 12.55 L5.05 12.42 L4.88 12.27 L4.70 12.12 L4.54 11.96 L4.18 11.98 L3.52 12.22 L2.77 12.45 L2.25 12.45 L2.05 12.20 L1.88 11.92 L1.73 11.64 L1.59 11.36 L1.46 11.06 L1.34 10.76 L1.25 10.46 L1.51 10.06 L2.13 9.61 L2.76 9.22 L3.04 8.94 L3.02 8.71 L3.00 8.48 L3.00 8.25 L3.00 8.02 L3.02 7.79 L3.04 7.56 L3.08 7.34 L3.12 7.11 L3.18 6.89 L2.99 6.59 L2.44 6.14 L1.87 5.61 L1.61 5.16 L1.73 4.86 L1.88 4.58 L2.05 4.30 L2.23 4.03 L2.42 3.78 L2.62 3.53 L2.84 3.29 L3.32 3.32 L4.01 3.63 L4.66 3.98 L5.05 4.08 L5.24 3.95 L5.43 3.82 L5.63 3.70 L5.83 3.59 L6.03 3.49 L6.24 3.40 L6.45 3.32 L6.67 3.24 L6.89 3.18 Z" fill="none" stroke="#3c3c46" stroke-width="1.6" stroke-linejoin="round"/><circle cx="8.25" cy="8.25" r="2.72" fill="none" stroke="#3c3c46" stroke-width="1.6"/></svg>
<svg style="position:absolute;left:1443.4px;top:653.5px;overflow:visible;" width="18" height="12" viewBox="0 0 18 12"><text x="0" y="11" font-family="Liberation Sans" font-size="8.2" fill="#6f6f7f">A</text><text x="5.6" y="6.6" font-family="Liberation Sans" font-size="8.2" fill="#6f6f7f">B</text><text x="11.4" y="11.4" font-family="Liberation Sans" font-size="8.2" fill="#6f6f7f">C</text></svg>
<div style="position:absolute;left:1468.52px;top:651px;font-size:15.2px;line-height:1;font-weight:bold;color:#2a2832;white-space:nowrap;letter-spacing:0.000px;transform:scaleX(0.9547);transform-origin:0 0;">Account Full</div>
<svg style="position:absolute;left:1589.3px;top:651.5px;overflow:visible;" width="14" height="15" viewBox="0 0 14 15"><path d="M1 1.2 H13 L8.7 7.8 V14 L5.3 12.0 V7.8 Z" fill="none" stroke="#3c3c46" stroke-width="1.5" stroke-linejoin="round"/></svg>
<svg style="position:absolute;left:1624px;top:651px;overflow:visible;" width="16.5" height="16.5" viewBox="0 0 16.5 16.5"><path d="M6.89 3.18 L7.06 2.87 L7.18 2.17 L7.35 1.41 L7.61 0.96 L7.93 0.91 L8.25 0.90 L8.57 0.91 L8.89 0.93 L9.21 0.96 L9.53 1.01 L9.84 1.09 L10.06 1.51 L10.14 2.27 L10.16 3.01 L10.26 3.40 L10.47 3.49 L10.67 3.59 L10.88 3.70 L11.07 3.82 L11.26 3.95 L11.45 4.08 L11.62 4.23 L11.80 4.38 L11.96 4.54 L12.32 4.52 L12.98 4.28 L13.73 4.05 L14.25 4.05 L14.45 4.30 L14.62 4.58 L14.77 4.86 L14.91 5.14 L15.04 5.44 L15.16 5.74 L15.25 6.04 L14.99 6.44 L14.37 6.89 L13.74 7.28 L13.46 7.56 L13.48 7.79 L13.50 8.02 L13.50 8.25 L13.50 8.48 L13.48 8.71 L13.46 8.94 L13.42 9.16 L13.38 9.39 L13.32 9.61 L13.51 9.91 L14.06 10.36 L14.63 10.89 L14.89 11.34 L14.77 11.64 L14.62 11.93 L14.45 12.20 L14.27 12.47 L14.08 12.72 L13.88 12.97 L13.66 13.21 L13.18 13.18 L12.49 12.87 L11.84 12.52 L11.45 12.42 L11.26 12.55 L11.07 12.68 L10.88 12.80 L10.67 12.91 L10.47 13.01 L10.26 13.10 L10.05 13.18 L9.83 13.26 L9.61 13.32 L9.44 13.63 L9.32 14.33 L9.15 15.09 L8.89 15.54 L8.57 15.59 L8.25 15.60 L7.93 15.59 L7.61 15.57 L7.29 15.54 L6.97 15.49 L6.66 15.41 L6.44 14.99 L6.36 14.23 L6.34 13.49 L6.24 13.10 L6.03 13.01 L5.83 12.91 L5.63 12.80 L5.43 12.68 L5.24 12.55 L5.05 12.42 L4.88 12.27 L4.70 12.12 L4.54 11.96 L4.18 11.98 L3.52 12.22 L2.77 12.45 L2.25 12.45 L2.05 12.20 L1.88 11.92 L1.73 11.64 L1.59 11.36 L1.46 11.06 L1.34 10.76 L1.25 10.46 L1.51 10.06 L2.13 9.61 L2.76 9.22 L3.04 8.94 L3.02 8.71 L3.00 8.48 L3.00 8.25 L3.00 8.02 L3.02 7.79 L3.04 7.56 L3.08 7.34 L3.12 7.11 L3.18 6.89 L2.99 6.59 L2.44 6.14 L1.87 5.61 L1.61 5.16 L1.73 4.86 L1.88 4.58 L2.05 4.30 L2.23 4.03 L2.42 3.78 L2.62 3.53 L2.84 3.29 L3.32 3.32 L4.01 3.63 L4.66 3.98 L5.05 4.08 L5.24 3.95 L5.43 3.82 L5.63 3.70 L5.83 3.59 L6.03 3.49 L6.24 3.40 L6.45 3.32 L6.67 3.24 L6.89 3.18 Z" fill="none" stroke="#3c3c46" stroke-width="1.6" stroke-linejoin="round"/><circle cx="8.25" cy="8.25" r="2.72" fill="none" stroke="#3c3c46" stroke-width="1.6"/></svg>
<svg style="position:absolute;left:1670.5px;top:654.5px;overflow:visible;" width="14" height="10" viewBox="0 0 14 10"><text x="0" y="8" font-family="Liberation Sans" font-size="8.5" fill="#6f6f7f">1.2</text></svg>
<div style="position:absolute;left:1692.90px;top:651px;font-size:15.2px;line-height:1;font-weight:bold;color:#2a2832;white-space:nowrap;letter-spacing:0.000px;transform:scaleX(0.9965);transform-origin:0 0;">Amount</div>
<svg style="position:absolute;left:1783.3px;top:651.5px;overflow:visible;" width="14" height="15" viewBox="0 0 14 15"><path d="M1 1.2 H13 L8.7 7.8 V14 L5.3 12.0 V7.8 Z" fill="none" stroke="#3c3c46" stroke-width="1.5" stroke-linejoin="round"/></svg>
<svg style="position:absolute;left:1818.4px;top:651px;overflow:visible;" width="16.5" height="16.5" viewBox="0 0 16.5 16.5"><path d="M6.89 3.18 L7.06 2.87 L7.18 2.17 L7.35 1.41 L7.61 0.96 L7.93 0.91 L8.25 0.90 L8.57 0.91 L8.89 0.93 L9.21 0.96 L9.53 1.01 L9.84 1.09 L10.06 1.51 L10.14 2.27 L10.16 3.01 L10.26 3.40 L10.47 3.49 L10.67 3.59 L10.88 3.70 L11.07 3.82 L11.26 3.95 L11.45 4.08 L11.62 4.23 L11.80 4.38 L11.96 4.54 L12.32 4.52 L12.98 4.28 L13.73 4.05 L14.25 4.05 L14.45 4.30 L14.62 4.58 L14.77 4.86 L14.91 5.14 L15.04 5.44 L15.16 5.74 L15.25 6.04 L14.99 6.44 L14.37 6.89 L13.74 7.28 L13.46 7.56 L13.48 7.79 L13.50 8.02 L13.50 8.25 L13.50 8.48 L13.48 8.71 L13.46 8.94 L13.42 9.16 L13.38 9.39 L13.32 9.61 L13.51 9.91 L14.06 10.36 L14.63 10.89 L14.89 11.34 L14.77 11.64 L14.62 11.93 L14.45 12.20 L14.27 12.47 L14.08 12.72 L13.88 12.97 L13.66 13.21 L13.18 13.18 L12.49 12.87 L11.84 12.52 L11.45 12.42 L11.26 12.55 L11.07 12.68 L10.88 12.80 L10.67 12.91 L10.47 13.01 L10.26 13.10 L10.05 13.18 L9.83 13.26 L9.61 13.32 L9.44 13.63 L9.32 14.33 L9.15 15.09 L8.89 15.54 L8.57 15.59 L8.25 15.60 L7.93 15.59 L7.61 15.57 L7.29 15.54 L6.97 15.49 L6.66 15.41 L6.44 14.99 L6.36 14.23 L6.34 13.49 L6.24 13.10 L6.03 13.01 L5.83 12.91 L5.63 12.80 L5.43 12.68 L5.24 12.55 L5.05 12.42 L4.88 12.27 L4.70 12.12 L4.54 11.96 L4.18 11.98 L3.52 12.22 L2.77 12.45 L2.25 12.45 L2.05 12.20 L1.88 11.92 L1.73 11.64 L1.59 11.36 L1.46 11.06 L1.34 10.76 L1.25 10.46 L1.51 10.06 L2.13 9.61 L2.76 9.22 L3.04 8.94 L3.02 8.71 L3.00 8.48 L3.00 8.25 L3.00 8.02 L3.02 7.79 L3.04 7.56 L3.08 7.34 L3.12 7.11 L3.18 6.89 L2.99 6.59 L2.44 6.14 L1.87 5.61 L1.61 5.16 L1.73 4.86 L1.88 4.58 L2.05 4.30 L2.23 4.03 L2.42 3.78 L2.62 3.53 L2.84 3.29 L3.32 3.32 L4.01 3.63 L4.66 3.98 L5.05 4.08 L5.24 3.95 L5.43 3.82 L5.63 3.70 L5.83 3.59 L6.03 3.49 L6.24 3.40 L6.45 3.32 L6.67 3.24 L6.89 3.18 Z" fill="none" stroke="#3c3c46" stroke-width="1.6" stroke-linejoin="round"/><circle cx="8.25" cy="8.25" r="2.72" fill="none" stroke="#3c3c46" stroke-width="1.6"/></svg>
<svg style="position:absolute;left:1862.7px;top:653.5px;overflow:visible;" width="18" height="12" viewBox="0 0 18 12"><text x="0" y="11" font-family="Liberation Sans" font-size="8.2" fill="#6f6f7f">A</text><text x="5.6" y="6.6" font-family="Liberation Sans" font-size="8.2" fill="#6f6f7f">B</text><text x="11.4" y="11.4" font-family="Liberation Sans" font-size="8.2" fill="#6f6f7f">C</text></svg>
<div style="position:absolute;left:1886.50px;top:647px;width:8.50px;height:25.2px;overflow:hidden"><div style="position:absolute;left:0;top:4px;font-size:15.2px;line-height:1;font-weight:bold;color:#2a2832;white-space:nowrap;letter-spacing:0.000px;">D</div></div>
<div style="position:absolute;left:464.90px;top:697px;font-size:14.3px;line-height:1;font-weight:normal;color:#3d3d45;white-space:nowrap;letter-spacing:0.000px;transform:scaleX(1.0032);transform-origin:0 0;">6003</div>
<div style="position:absolute;left:679.21px;top:697px;font-size:14.3px;line-height:1;font-weight:normal;color:#3d3d45;white-space:nowrap;letter-spacing:0.000px;transform:scaleX(0.9898);transform-origin:0 0;">Salaries and Wages Expense</div>
<div style="position:absolute;left:962.22px;top:697px;font-size:14.3px;line-height:1;font-weight:normal;color:#3d3d45;white-space:nowrap;letter-spacing:0.000px;transform:scaleX(0.9538);transform-origin:0 0;">2024-01-31T00:00:00</div>
<div style="position:absolute;left:1189.92px;top:697px;font-size:14.3px;line-height:1;font-weight:normal;color:#3d3d45;white-space:nowrap;letter-spacing:0.000px;transform:scaleX(0.9600);transform-origin:0 0;">52,046</div>
<div style="position:absolute;left:1439.79px;top:688px;font-size:14.3px;line-height:1;font-weight:normal;color:#3d3d45;white-space:nowrap;letter-spacing:0.000px;transform:scaleX(1.0263);transform-origin:0 0;">6003 - Salaries and Wages</div>
<div style="position:absolute;left:1440.24px;top:707px;font-size:14.3px;line-height:1;font-weight:normal;color:#3d3d45;white-space:nowrap;letter-spacing:0.000px;transform:scaleX(0.9630);transform-origin:0 0;">Expense</div>
<div style="position:absolute;left:1664.72px;top:697px;font-size:14.3px;line-height:1;font-weight:normal;color:#3d3d45;white-space:nowrap;letter-spacing:0.000px;transform:scaleX(0.9600);transform-origin:0 0;">52,046</div>
<div style="position:absolute;left:1859.60px;top:693px;width:35.40px;height:24.3px;overflow:hidden"><div style="position:absolute;left:0;top:4px;font-size:14.3px;line-height:1;font-weight:normal;color:#3d3d45;white-space:nowrap;letter-spacing:0.000px;">Activi</div></div>
<div style="position:absolute;left:464.90px;top:751px;font-size:14.3px;line-height:1;font-weight:normal;color:#3d3d45;white-space:nowrap;letter-spacing:0.000px;transform:scaleX(1.0032);transform-origin:0 0;">6003</div>
<div style="position:absolute;left:679.21px;top:751px;font-size:14.3px;line-height:1;font-weight:normal;color:#3d3d45;white-space:nowrap;letter-spacing:0.000px;transform:scaleX(0.9898);transform-origin:0 0;">Salaries and Wages Expense</div>
<div style="position:absolute;left:962.20px;top:751px;font-size:14.3px;line-height:1;font-weight:normal;color:#3d3d45;white-space:nowrap;letter-spacing:0.000px;transform:scaleX(1.0073);transform-origin:0 0;">2024-02-29T00:00:00</div>
<div style="position:absolute;left:1189.93px;top:751px;font-size:14.3px;line-height:1;font-weight:normal;color:#3d3d45;white-space:nowrap;letter-spacing:0.000px;transform:scaleX(0.9459);transform-origin:0 0;">57,823</div>
<div style="position:absolute;left:1439.79px;top:742px;font-size:14.3px;line-height:1;font-weight:normal;color:#3d3d45;white-space:nowrap;letter-spacing:0.000px;transform:scaleX(1.0263);transform-origin:0 0;">6003 - Salaries and Wages</div>
<div style="position:absolute;left:1440.24px;top:760px;font-size:14.3px;line-height:1;font-weight:normal;color:#3d3d45;white-space:nowrap;letter-spacing:0.000px;transform:scaleX(0.9630);transform-origin:0 0;">Expense</div>
<div style="position:absolute;left:1664.73px;top:750px;font-size:14.3px;line-height:1;font-weight:normal;color:#3d3d45;white-space:nowrap;letter-spacing:0.000px;transform:scaleX(0.9459);transform-origin:0 0;">57,823</div>
<div style="position:absolute;left:1859.60px;top:746px;width:35.40px;height:24.3px;overflow:hidden"><div style="position:absolute;left:0;top:4px;font-size:14.3px;line-height:1;font-weight:normal;color:#3d3d45;white-space:nowrap;letter-spacing:0.000px;">Activi</div></div>
<div style="position:absolute;left:464.90px;top:804px;font-size:14.3px;line-height:1;font-weight:normal;color:#3d3d45;white-space:nowrap;letter-spacing:0.000px;transform:scaleX(1.0032);transform-origin:0 0;">6003</div>
<div style="position:absolute;left:679.21px;top:804px;font-size:14.3px;line-height:1;font-weight:normal;color:#3d3d45;white-space:nowrap;letter-spacing:0.000px;transform:scaleX(0.9898);transform-origin:0 0;">Salaries and Wages Expense</div>
<div style="position:absolute;left:962.20px;top:804px;font-size:14.3px;line-height:1;font-weight:normal;color:#3d3d45;white-space:nowrap;letter-spacing:0.000px;transform:scaleX(1.0095);transform-origin:0 0;">2024-04-30T00:00:00</div>
<div style="position:absolute;left:1189.94px;top:804px;font-size:14.3px;line-height:1;font-weight:normal;color:#3d3d45;white-space:nowrap;letter-spacing:-0.717px;transform:scaleX(0.9200);transform-origin:0 0;">71,372</div>
<div style="position:absolute;left:1439.79px;top:795px;font-size:14.3px;line-height:1;font-weight:normal;color:#3d3d45;white-space:nowrap;letter-spacing:0.000px;transform:scaleX(1.0263);transform-origin:0 0;">6003 - Salaries and Wages</div>
<div style="position:absolute;left:1440.24px;top:814px;font-size:14.3px;line-height:1;font-weight:normal;color:#3d3d45;white-space:nowrap;letter-spacing:0.000px;transform:scaleX(0.9630);transform-origin:0 0;">Expense</div>
<div style="position:absolute;left:1664.74px;top:804px;font-size:14.3px;line-height:1;font-weight:normal;color:#3d3d45;white-space:nowrap;letter-spacing:-0.717px;transform:scaleX(0.9200);transform-origin:0 0;">71,372</div>
<div style="position:absolute;left:1859.60px;top:800px;width:35.40px;height:24.3px;overflow:hidden"><div style="position:absolute;left:0;top:4px;font-size:14.3px;line-height:1;font-weight:normal;color:#3d3d45;white-space:nowrap;letter-spacing:0.000px;">Activi</div></div>
<div style="position:absolute;left:464.90px;top:857px;font-size:14.3px;line-height:1;font-weight:normal;color:#3d3d45;white-space:nowrap;letter-spacing:0.000px;transform:scaleX(1.0032);transform-origin:0 0;">6003</div>
<div style="position:absolute;left:679.21px;top:857px;font-size:14.3px;line-height:1;font-weight:normal;color:#3d3d45;white-space:nowrap;letter-spacing:0.000px;transform:scaleX(0.9898);transform-origin:0 0;">Salaries and Wages Expense</div>
<div style="position:absolute;left:962.21px;top:857px;font-size:14.3px;line-height:1;font-weight:normal;color:#3d3d45;white-space:nowrap;letter-spacing:0.000px;transform:scaleX(0.9861);transform-origin:0 0;">2024-05-31T00:00:00</div>
<div style="position:absolute;left:1189.93px;top:857px;font-size:14.3px;line-height:1;font-weight:normal;color:#3d3d45;white-space:nowrap;letter-spacing:0.000px;transform:scaleX(0.9488);transform-origin:0 0;">79,294</div>
<div style="position:absolute;left:1439.79px;top:848px;font-size:14.3px;line-height:1;font-weight:normal;color:#3d3d45;white-space:nowrap;letter-spacing:0.000px;transform:scaleX(1.0263);transform-origin:0 0;">6003 - Salaries and Wages</div>
<div style="position:absolute;left:1440.24px;top:867px;font-size:14.3px;line-height:1;font-weight:normal;color:#3d3d45;white-space:nowrap;letter-spacing:0.000px;transform:scaleX(0.9630);transform-origin:0 0;">Expense</div>
<div style="position:absolute;left:1664.73px;top:857px;font-size:14.3px;line-height:1;font-weight:normal;color:#3d3d45;white-space:nowrap;letter-spacing:0.000px;transform:scaleX(0.9488);transform-origin:0 0;">79,294</div>
<div style="position:absolute;left:1859.60px;top:853px;width:35.40px;height:24.3px;overflow:hidden"><div style="position:absolute;left:0;top:4px;font-size:14.3px;line-height:1;font-weight:normal;color:#3d3d45;white-space:nowrap;letter-spacing:0.000px;">Activi</div></div>
<div style="position:absolute;left:1895px;top:639px;width:25px;height:249px;background:#ffffff"></div>
<div style="position:absolute;left:1895px;top:639px;width:1px;height:249px;background:#ececf0"></div>
<div style="position:absolute;left:1895px;top:663px;width:24px;height:1px;background:#ececf0"></div>
<svg style="position:absolute;left:1902px;top:647.6px;overflow:visible;" width="10" height="5.8" viewBox="0 0 10 5.8"><path d="M0 5.8 L5.0 0 L10 5.8 Z" fill="#111"/></svg>
<div style="position:absolute;left:1902.5px;top:671.5px;width:8.5px;height:12px;background:#d8d6dd;border-radius:4px"></div>
<div style="position:absolute;left:1895px;top:863px;width:24px;height:1px;background:#ececf0"></div>
<svg style="position:absolute;left:1902.2px;top:874px;overflow:visible;" width="9.5" height="5.2" viewBox="0 0 9.5 5.2"><path d="M0 0 L9.5 0 L4.75 5.2 Z" fill="#111"/></svg>
<div style="position:absolute;left:457px;top:888px;width:1463px;height:1px;background:#e4e3e8"></div>
<div style="position:absolute;left:481px;top:888px;width:1px;height:23px;background:#ececf0"></div>
<svg style="position:absolute;left:466.2px;top:894.7px;overflow:visible;" width="4.9" height="9.3" viewBox="0 0 4.9 9.3"><path d="M4.9 0 L0 4.65 L4.9 9.3 Z" fill="#111"/></svg>
<div style="position:absolute;left:489px;top:896px;width:856px;height:7.5px;background:#dcdae1;border-radius:4px"></div>
<div style="position:absolute;left:1870px;top:888px;width:1px;height:23px;background:#ececf0"></div>
<div style="position:absolute;left:1894px;top:888px;width:1px;height:23px;background:#ececf0"></div>
<svg style="position:absolute;left:1881px;top:894.7px;overflow:visible;" width="5" height="9.3" viewBox="0 0 5 9.3"><path d="M0 0 L5 4.65 L0 9.3 Z" fill="#111"/></svg>
<div style="position:absolute;left:0px;top:911px;width:1920px;height:1px;background:#a9a8ae"></div>
</body></html>
